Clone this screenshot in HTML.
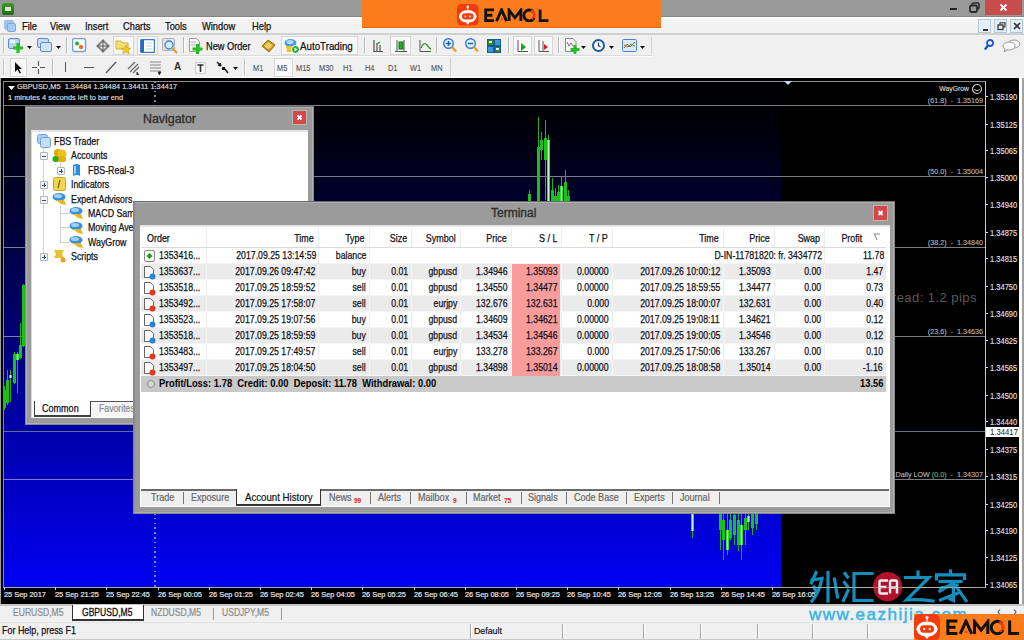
<!DOCTYPE html><html><head><meta charset="utf-8"><style>
html,body{margin:0;padding:0;}
body{width:1024px;height:640px;overflow:hidden;position:relative;background:#f0f0f0;font-family:"Liberation Sans", sans-serif;}
div{box-sizing:border-box;}
</style></head><body>
<div style="position:absolute;left:0px;top:0px;width:1024px;height:17px;background:#999999;"></div>
<div style="position:absolute;left:0px;top:16px;width:1024px;height:1px;background:#858585;"></div>
<div style="position:absolute;left:2px;top:3px;width:12px;height:12px;background:linear-gradient(#3f9a2a,#1d6a12);border-radius:2px;"><div style="position:absolute;left:3px;top:4px;width:6px;height:4px;background:#d8e8d0;"></div></div>
<div style="position:absolute;left:950px;top:8px;width:7px;height:2px;background:#222;"></div>
<svg style="position:absolute;left:969px;top:2px" width="11" height="11"><rect x="3" y="1" width="7" height="6" rx="1.5" fill="none" stroke="#2a2a2a" stroke-width="1.6"/><rect x="1" y="3.5" width="7" height="6.5" rx="1.5" fill="#999" stroke="#2a2a2a" stroke-width="1.8"/></svg>
<div style="position:absolute;left:985px;top:0px;width:37px;height:15px;background:#c94c4c;"><svg width="37" height="15" style="position:absolute;left:0;top:0"><path d="M15.5 4.5 L21.5 10.5 M21.5 4.5 L15.5 10.5" stroke="#fff" stroke-width="1.8"/></svg></div>
<div style="position:absolute;left:0px;top:17px;width:1024px;height:17px;background:#f2f2f2;border-top:2px solid #fdfdfd;"></div>
<div style="position:absolute;left:0px;top:33px;width:1024px;height:2px;background:#d0d0d0;"></div>
<div style="position:absolute;left:4px;top:20px;width:10px;height:10px;background:#9cc3ec;border-radius:2px;"></div>
<div style="position:absolute;left:7px;top:23px;width:9px;height:9px;background:#a8cdf2;border:1px solid #7aa8d8;border-radius:2px;"></div>
<div style="position:absolute;left:22px;top:21.2px;font-size:10.6px;color:#111;white-space:pre;line-height:1;transform:scaleX(0.88);transform-origin:left top;-webkit-text-stroke:0.25px #111;">File</div>
<div style="position:absolute;left:50px;top:21.2px;font-size:10.6px;color:#111;white-space:pre;line-height:1;transform:scaleX(0.88);transform-origin:left top;-webkit-text-stroke:0.25px #111;">View</div>
<div style="position:absolute;left:85px;top:21.2px;font-size:10.6px;color:#111;white-space:pre;line-height:1;transform:scaleX(0.88);transform-origin:left top;-webkit-text-stroke:0.25px #111;">Insert</div>
<div style="position:absolute;left:123px;top:21.2px;font-size:10.6px;color:#111;white-space:pre;line-height:1;transform:scaleX(0.88);transform-origin:left top;-webkit-text-stroke:0.25px #111;">Charts</div>
<div style="position:absolute;left:165px;top:21.2px;font-size:10.6px;color:#111;white-space:pre;line-height:1;transform:scaleX(0.88);transform-origin:left top;-webkit-text-stroke:0.25px #111;">Tools</div>
<div style="position:absolute;left:202px;top:21.2px;font-size:10.6px;color:#111;white-space:pre;line-height:1;transform:scaleX(0.88);transform-origin:left top;-webkit-text-stroke:0.25px #111;">Window</div>
<div style="position:absolute;left:252px;top:21.2px;font-size:10.6px;color:#111;white-space:pre;line-height:1;transform:scaleX(0.88);transform-origin:left top;-webkit-text-stroke:0.25px #111;">Help</div>
<div style="position:absolute;left:978px;top:19px;width:13px;height:14px;background:#e2eefa;border:1px solid #b9c6d3;"></div>
<div style="position:absolute;left:994px;top:19px;width:13px;height:14px;background:#e2eefa;border:1px solid #b9c6d3;"></div>
<div style="position:absolute;left:1010px;top:19px;width:13px;height:14px;background:#e2eefa;border:1px solid #b9c6d3;"></div>
<div style="position:absolute;left:983px;top:29px;width:5px;height:2px;background:#333;"></div>
<svg style="position:absolute;left:997px;top:22px" width="9" height="9"><rect x="3" y="0.8" width="5" height="4" fill="none" stroke="#444" stroke-width="1.2"/><rect x="1" y="3" width="5" height="4.5" fill="#e2eefa" stroke="#444" stroke-width="1.4"/></svg>
<svg style="position:absolute;left:1013px;top:22px" width="8" height="8"><path d="M1 1L7 7M7 1L1 7" stroke="#333" stroke-width="1.6"/></svg>
<div style="position:absolute;left:0px;top:35px;width:1024px;height:21px;background:#f0f0f0;"></div>
<div style="position:absolute;left:0px;top:55px;width:652px;height:2px;background:#dcdcdc;border-bottom:1px solid #fafafa;"></div>
<div style="position:absolute;left:0px;top:57px;width:1024px;height:21px;background:#f0f0f0;"></div>
<div style="position:absolute;left:0px;top:77px;width:1024px;height:1px;background:#ffffff;"></div>
<div style="position:absolute;left:0px;top:78px;width:1024px;height:527px;background:#a0a0a0;"></div>
<div style="position:absolute;left:1px;top:78px;width:1018px;height:526px;background:#000;"></div>
<div style="position:absolute;left:1019px;top:78px;width:3px;height:527px;background:#fdfdfd;"></div>
<div style="position:absolute;left:3px;top:81px;width:982px;height:507px;border-left:1px solid #8a8a70;border-top:1px solid #8c8c8c;"></div>
<div style="position:absolute;left:4px;top:82px;width:777px;height:505px;background:linear-gradient(180deg,#000002 0%,#00000c 10%,#00003c 30%,#0000a0 65%,#0000f2 100%);"></div>
<div style="position:absolute;left:985px;top:81px;width:1px;height:507px;background:#c8c8c8;"></div>
<div style="position:absolute;left:3px;top:587px;width:982px;height:1px;background:#a8a888;"></div>
<div style="position:absolute;left:986px;top:96px;width:2px;height:1px;background:#ddd;"></div>
<div style="position:absolute;left:990px;top:93.4px;font-size:8.4px;color:#e4e4ec;white-space:pre;line-height:1;transform:scaleX(0.9);transform-origin:left top;-webkit-text-stroke:0.1px #e4e4ec;">1.35190</div>
<div style="position:absolute;left:986px;top:124px;width:2px;height:1px;background:#ddd;"></div>
<div style="position:absolute;left:990px;top:121.4px;font-size:8.4px;color:#e4e4ec;white-space:pre;line-height:1;transform:scaleX(0.9);transform-origin:left top;-webkit-text-stroke:0.1px #e4e4ec;">1.35125</div>
<div style="position:absolute;left:986px;top:150px;width:2px;height:1px;background:#ddd;"></div>
<div style="position:absolute;left:990px;top:147.4px;font-size:8.4px;color:#e4e4ec;white-space:pre;line-height:1;transform:scaleX(0.9);transform-origin:left top;-webkit-text-stroke:0.1px #e4e4ec;">1.35065</div>
<div style="position:absolute;left:986px;top:177px;width:2px;height:1px;background:#ddd;"></div>
<div style="position:absolute;left:990px;top:174.4px;font-size:8.4px;color:#e4e4ec;white-space:pre;line-height:1;transform:scaleX(0.9);transform-origin:left top;-webkit-text-stroke:0.1px #e4e4ec;">1.35000</div>
<div style="position:absolute;left:986px;top:204px;width:2px;height:1px;background:#ddd;"></div>
<div style="position:absolute;left:990px;top:201.4px;font-size:8.4px;color:#e4e4ec;white-space:pre;line-height:1;transform:scaleX(0.9);transform-origin:left top;-webkit-text-stroke:0.1px #e4e4ec;">1.34940</div>
<div style="position:absolute;left:986px;top:232px;width:2px;height:1px;background:#ddd;"></div>
<div style="position:absolute;left:990px;top:229.4px;font-size:8.4px;color:#e4e4ec;white-space:pre;line-height:1;transform:scaleX(0.9);transform-origin:left top;-webkit-text-stroke:0.1px #e4e4ec;">1.34875</div>
<div style="position:absolute;left:986px;top:258px;width:2px;height:1px;background:#ddd;"></div>
<div style="position:absolute;left:990px;top:255.4px;font-size:8.4px;color:#e4e4ec;white-space:pre;line-height:1;transform:scaleX(0.9);transform-origin:left top;-webkit-text-stroke:0.1px #e4e4ec;">1.34815</div>
<div style="position:absolute;left:986px;top:286px;width:2px;height:1px;background:#ddd;"></div>
<div style="position:absolute;left:990px;top:283.4px;font-size:8.4px;color:#e4e4ec;white-space:pre;line-height:1;transform:scaleX(0.9);transform-origin:left top;-webkit-text-stroke:0.1px #e4e4ec;">1.34750</div>
<div style="position:absolute;left:986px;top:313px;width:2px;height:1px;background:#ddd;"></div>
<div style="position:absolute;left:990px;top:310.4px;font-size:8.4px;color:#e4e4ec;white-space:pre;line-height:1;transform:scaleX(0.9);transform-origin:left top;-webkit-text-stroke:0.1px #e4e4ec;">1.34690</div>
<div style="position:absolute;left:986px;top:340px;width:2px;height:1px;background:#ddd;"></div>
<div style="position:absolute;left:990px;top:337.4px;font-size:8.4px;color:#e4e4ec;white-space:pre;line-height:1;transform:scaleX(0.9);transform-origin:left top;-webkit-text-stroke:0.1px #e4e4ec;">1.34625</div>
<div style="position:absolute;left:986px;top:367px;width:2px;height:1px;background:#ddd;"></div>
<div style="position:absolute;left:990px;top:364.4px;font-size:8.4px;color:#e4e4ec;white-space:pre;line-height:1;transform:scaleX(0.9);transform-origin:left top;-webkit-text-stroke:0.1px #e4e4ec;">1.34565</div>
<div style="position:absolute;left:986px;top:395px;width:2px;height:1px;background:#ddd;"></div>
<div style="position:absolute;left:990px;top:392.4px;font-size:8.4px;color:#e4e4ec;white-space:pre;line-height:1;transform:scaleX(0.9);transform-origin:left top;-webkit-text-stroke:0.1px #e4e4ec;">1.34500</div>
<div style="position:absolute;left:986px;top:421px;width:2px;height:1px;background:#ddd;"></div>
<div style="position:absolute;left:990px;top:418.4px;font-size:8.4px;color:#e4e4ec;white-space:pre;line-height:1;transform:scaleX(0.9);transform-origin:left top;-webkit-text-stroke:0.1px #e4e4ec;">1.34440</div>
<div style="position:absolute;left:986px;top:449px;width:2px;height:1px;background:#ddd;"></div>
<div style="position:absolute;left:990px;top:446.4px;font-size:8.4px;color:#e4e4ec;white-space:pre;line-height:1;transform:scaleX(0.9);transform-origin:left top;-webkit-text-stroke:0.1px #e4e4ec;">1.34375</div>
<div style="position:absolute;left:986px;top:476px;width:2px;height:1px;background:#ddd;"></div>
<div style="position:absolute;left:990px;top:473.4px;font-size:8.4px;color:#e4e4ec;white-space:pre;line-height:1;transform:scaleX(0.9);transform-origin:left top;-webkit-text-stroke:0.1px #e4e4ec;">1.34315</div>
<div style="position:absolute;left:986px;top:504px;width:2px;height:1px;background:#ddd;"></div>
<div style="position:absolute;left:990px;top:501.4px;font-size:8.4px;color:#e4e4ec;white-space:pre;line-height:1;transform:scaleX(0.9);transform-origin:left top;-webkit-text-stroke:0.1px #e4e4ec;">1.34250</div>
<div style="position:absolute;left:986px;top:530px;width:2px;height:1px;background:#ddd;"></div>
<div style="position:absolute;left:990px;top:527.4px;font-size:8.4px;color:#e4e4ec;white-space:pre;line-height:1;transform:scaleX(0.9);transform-origin:left top;-webkit-text-stroke:0.1px #e4e4ec;">1.34190</div>
<div style="position:absolute;left:986px;top:557px;width:2px;height:1px;background:#ddd;"></div>
<div style="position:absolute;left:990px;top:554.4px;font-size:8.4px;color:#e4e4ec;white-space:pre;line-height:1;transform:scaleX(0.9);transform-origin:left top;-webkit-text-stroke:0.1px #e4e4ec;">1.34125</div>
<div style="position:absolute;left:986px;top:584px;width:2px;height:1px;background:#ddd;"></div>
<div style="position:absolute;left:990px;top:581.4px;font-size:8.4px;color:#e4e4ec;white-space:pre;line-height:1;transform:scaleX(0.9);transform-origin:left top;-webkit-text-stroke:0.1px #e4e4ec;">1.34065</div>
<div style="position:absolute;left:986px;top:427px;width:33px;height:10px;background:#fff;"><div style="position:absolute;left:4px;top:1px;font-size:9px;line-height:1;color:#222;transform:scaleX(0.86);transform-origin:left top;white-space:pre">1.34417</div></div>
<div style="position:absolute;left:4px;top:105px;width:981px;height:1px;background:rgba(200,200,210,0.62);"></div>
<div style="position:absolute;right:41px;top:96.8px;font-size:7.2px;color:#b0b0b0;white-space:pre;line-height:1;-webkit-text-stroke:0.15px #b0b0b0;">(61.8)  -  1.35169</div>
<div style="position:absolute;left:4px;top:176px;width:981px;height:1px;background:rgba(200,200,210,0.62);"></div>
<div style="position:absolute;right:41px;top:167.8px;font-size:7.2px;color:#b0b0b0;white-space:pre;line-height:1;-webkit-text-stroke:0.15px #b0b0b0;">(50.0)  -  1.35004</div>
<div style="position:absolute;left:4px;top:247px;width:981px;height:1px;background:rgba(200,200,210,0.62);"></div>
<div style="position:absolute;right:41px;top:238.8px;font-size:7.2px;color:#b0b0b0;white-space:pre;line-height:1;-webkit-text-stroke:0.15px #b0b0b0;">(38.2)  -  1.34840</div>
<div style="position:absolute;left:4px;top:336px;width:981px;height:1px;background:rgba(200,200,210,0.62);"></div>
<div style="position:absolute;right:41px;top:327.8px;font-size:7.2px;color:#b0b0b0;white-space:pre;line-height:1;-webkit-text-stroke:0.15px #b0b0b0;">(23.6)  -  1.34636</div>
<div style="position:absolute;left:4px;top:479px;width:981px;height:1px;background:rgba(200,200,210,0.62);"></div>
<div style="position:absolute;right:41px;top:470.8px;font-size:7.2px;color:#b0b0b0;white-space:pre;line-height:1;-webkit-text-stroke:0.15px #b0b0b0;">Daily LOW <span style="color:#40b040">(0.0)</span>  -  1.34307</div>
<div style="position:absolute;left:4px;top:431px;width:981px;height:1px;background:#607088;"></div>
<div style="position:absolute;right:55px;top:84.5px;font-size:7.6px;color:#d8d8d8;white-space:pre;line-height:1;transform:scaleX(0.9);transform-origin:right top;-webkit-text-stroke:0.15px #d8d8d8;">WayGrow</div>
<svg style="position:absolute;left:971px;top:82.5px" width="12" height="12"><circle cx="6" cy="6" r="4.5" fill="none" stroke="#ccc" stroke-width="1.2"/><path d="M3.5 6.5 Q6 9 8.5 6.5" stroke="#ccc" fill="none"/></svg>
<svg style="position:absolute;left:8px;top:86px" width="8" height="6"><path d="M0 0L7 0L3.5 4Z" fill="#fff"/></svg>
<div style="position:absolute;left:17px;top:83px;font-size:7.4px;color:#d8d8d8;white-space:pre;line-height:1;-webkit-text-stroke:0.2px #d8d8d8;">GBPUSD,M5  1.34484 1.34484 1.34411 1.34417</div>
<div style="position:absolute;left:8px;top:94px;font-size:7.4px;color:#d8d8d8;white-space:pre;line-height:1;-webkit-text-stroke:0.2px #d8d8d8;">1 minutes 4 seconds left to bar end</div>
<div style="position:absolute;left:154px;top:81px;width:2px;height:506px;background:repeating-linear-gradient(180deg,rgba(176,176,150,0.75) 0 1.6px,transparent 1.6px 4.8px);"></div>
<div style="position:absolute;left:4px;top:587px;width:1px;height:3px;background:#d8d8b0;"></div>
<div style="position:absolute;left:4px;top:591px;font-size:7.4px;color:#e8e8e8;white-space:pre;line-height:1;-webkit-text-stroke:0.2px #e8e8e8;">25 Sep 2017</div>
<div style="position:absolute;left:55px;top:587px;width:1px;height:3px;background:#d8d8b0;"></div>
<div style="position:absolute;left:55px;top:591px;font-size:7.4px;color:#e8e8e8;white-space:pre;line-height:1;-webkit-text-stroke:0.2px #e8e8e8;">25 Sep 21:25</div>
<div style="position:absolute;left:106px;top:587px;width:1px;height:3px;background:#d8d8b0;"></div>
<div style="position:absolute;left:106px;top:591px;font-size:7.4px;color:#e8e8e8;white-space:pre;line-height:1;-webkit-text-stroke:0.2px #e8e8e8;">25 Sep 22:45</div>
<div style="position:absolute;left:158px;top:587px;width:1px;height:3px;background:#d8d8b0;"></div>
<div style="position:absolute;left:158px;top:591px;font-size:7.4px;color:#e8e8e8;white-space:pre;line-height:1;-webkit-text-stroke:0.2px #e8e8e8;">26 Sep 00:05</div>
<div style="position:absolute;left:209px;top:587px;width:1px;height:3px;background:#d8d8b0;"></div>
<div style="position:absolute;left:209px;top:591px;font-size:7.4px;color:#e8e8e8;white-space:pre;line-height:1;-webkit-text-stroke:0.2px #e8e8e8;">26 Sep 01:25</div>
<div style="position:absolute;left:260px;top:587px;width:1px;height:3px;background:#d8d8b0;"></div>
<div style="position:absolute;left:260px;top:591px;font-size:7.4px;color:#e8e8e8;white-space:pre;line-height:1;-webkit-text-stroke:0.2px #e8e8e8;">26 Sep 02:45</div>
<div style="position:absolute;left:311px;top:587px;width:1px;height:3px;background:#d8d8b0;"></div>
<div style="position:absolute;left:311px;top:591px;font-size:7.4px;color:#e8e8e8;white-space:pre;line-height:1;-webkit-text-stroke:0.2px #e8e8e8;">26 Sep 04:05</div>
<div style="position:absolute;left:362px;top:587px;width:1px;height:3px;background:#d8d8b0;"></div>
<div style="position:absolute;left:362px;top:591px;font-size:7.4px;color:#e8e8e8;white-space:pre;line-height:1;-webkit-text-stroke:0.2px #e8e8e8;">26 Sep 05:25</div>
<div style="position:absolute;left:414px;top:587px;width:1px;height:3px;background:#d8d8b0;"></div>
<div style="position:absolute;left:414px;top:591px;font-size:7.4px;color:#e8e8e8;white-space:pre;line-height:1;-webkit-text-stroke:0.2px #e8e8e8;">26 Sep 06:45</div>
<div style="position:absolute;left:465px;top:587px;width:1px;height:3px;background:#d8d8b0;"></div>
<div style="position:absolute;left:465px;top:591px;font-size:7.4px;color:#e8e8e8;white-space:pre;line-height:1;-webkit-text-stroke:0.2px #e8e8e8;">26 Sep 08:05</div>
<div style="position:absolute;left:516px;top:587px;width:1px;height:3px;background:#d8d8b0;"></div>
<div style="position:absolute;left:516px;top:591px;font-size:7.4px;color:#e8e8e8;white-space:pre;line-height:1;-webkit-text-stroke:0.2px #e8e8e8;">26 Sep 09:25</div>
<div style="position:absolute;left:567px;top:587px;width:1px;height:3px;background:#d8d8b0;"></div>
<div style="position:absolute;left:567px;top:591px;font-size:7.4px;color:#e8e8e8;white-space:pre;line-height:1;-webkit-text-stroke:0.2px #e8e8e8;">26 Sep 10:45</div>
<div style="position:absolute;left:618px;top:587px;width:1px;height:3px;background:#d8d8b0;"></div>
<div style="position:absolute;left:618px;top:591px;font-size:7.4px;color:#e8e8e8;white-space:pre;line-height:1;-webkit-text-stroke:0.2px #e8e8e8;">26 Sep 12:05</div>
<div style="position:absolute;left:670px;top:587px;width:1px;height:3px;background:#d8d8b0;"></div>
<div style="position:absolute;left:670px;top:591px;font-size:7.4px;color:#e8e8e8;white-space:pre;line-height:1;-webkit-text-stroke:0.2px #e8e8e8;">26 Sep 13:25</div>
<div style="position:absolute;left:721px;top:587px;width:1px;height:3px;background:#d8d8b0;"></div>
<div style="position:absolute;left:721px;top:591px;font-size:7.4px;color:#e8e8e8;white-space:pre;line-height:1;-webkit-text-stroke:0.2px #e8e8e8;">26 Sep 14:45</div>
<div style="position:absolute;left:772px;top:587px;width:1px;height:3px;background:#d8d8b0;"></div>
<div style="position:absolute;left:772px;top:591px;font-size:7.4px;color:#e8e8e8;white-space:pre;line-height:1;-webkit-text-stroke:0.2px #e8e8e8;">26 Sep 16:05</div>
<svg style="position:absolute;left:784px;top:81px" width="9" height="6"><path d="M0 0L8 0L4 4Z" fill="#c8d8f0"/></svg>
<div style="position:absolute;right:47px;top:291px;font-size:13px;color:#5a5a5a;white-space:pre;line-height:1;letter-spacing:0.45px;">Spread: 1.2 pips</div>
<div style="position:absolute;left:4px;top:386px;width:1px;height:24px;background:#18b418;"></div><div style="position:absolute;left:3px;top:390px;width:3px;height:18px;background:#1cc01c;"></div>
<div style="position:absolute;left:7px;top:370px;width:1px;height:35px;background:#18b418;"></div><div style="position:absolute;left:6px;top:380px;width:3px;height:23px;background:#1cc01c;"></div>
<div style="position:absolute;left:10px;top:370px;width:1px;height:32px;background:#18b418;"></div><div style="position:absolute;left:9px;top:375px;width:3px;height:3px;background:#b8ffb0;border-left:1px solid #30e030;border-right:1px solid #30e030;"></div>
<div style="position:absolute;left:14px;top:352px;width:1px;height:32px;background:#18b418;"></div><div style="position:absolute;left:13px;top:354px;width:3px;height:29px;background:#1cc01c;"></div>
<div style="position:absolute;left:17px;top:352px;width:1px;height:41px;background:#18b418;"></div><div style="position:absolute;left:16px;top:354px;width:3px;height:6px;background:#b8ffb0;border-left:1px solid #30e030;border-right:1px solid #30e030;"></div>
<div style="position:absolute;left:20px;top:323px;width:1px;height:36px;background:#18b418;"></div><div style="position:absolute;left:19px;top:345px;width:3px;height:13px;background:#1cc01c;"></div>
<div style="position:absolute;left:23px;top:284px;width:1px;height:63px;background:#18b418;"></div><div style="position:absolute;left:22px;top:285px;width:3px;height:61px;background:#1cc01c;"></div>
<div style="position:absolute;left:529px;top:190px;width:1px;height:11px;background:#18b418;"></div><div style="position:absolute;left:528px;top:194px;width:3px;height:7px;background:#1cc01c;"></div>
<div style="position:absolute;left:538px;top:117px;width:1px;height:84px;background:#18b418;"></div><div style="position:absolute;left:537px;top:147px;width:3px;height:54px;background:#1cc01c;"></div>
<div style="position:absolute;left:541px;top:132px;width:1px;height:28px;background:#18b418;"></div><div style="position:absolute;left:540px;top:140px;width:3px;height:10px;background:#1cc01c;"></div>
<div style="position:absolute;left:545px;top:120px;width:1px;height:80px;background:#18b418;"></div><div style="position:absolute;left:544px;top:138px;width:3px;height:22px;background:#1cc01c;"></div>
<div style="position:absolute;left:548px;top:135px;width:1px;height:66px;background:#18b418;"></div><div style="position:absolute;left:547px;top:140px;width:3px;height:61px;background:#b8ffb0;border-left:1px solid #30e030;border-right:1px solid #30e030;"></div>
<div style="position:absolute;left:552px;top:178px;width:1px;height:23px;background:#18b418;"></div><div style="position:absolute;left:551px;top:190px;width:3px;height:11px;background:#1cc01c;"></div>
<div style="position:absolute;left:555px;top:188px;width:1px;height:13px;background:#18b418;"></div><div style="position:absolute;left:554px;top:196px;width:3px;height:5px;background:#1cc01c;"></div>
<div style="position:absolute;left:558px;top:185px;width:1px;height:16px;background:#18b418;"></div><div style="position:absolute;left:557px;top:192px;width:3px;height:9px;background:#1cc01c;"></div>
<div style="position:absolute;left:561px;top:176px;width:1px;height:25px;background:#18b418;"></div><div style="position:absolute;left:560px;top:186px;width:3px;height:15px;background:#b8ffb0;border-left:1px solid #30e030;border-right:1px solid #30e030;"></div>
<div style="position:absolute;left:565px;top:170px;width:1px;height:31px;background:#18b418;"></div><div style="position:absolute;left:564px;top:182px;width:3px;height:19px;background:#1cc01c;"></div>
<div style="position:absolute;left:568px;top:190px;width:1px;height:11px;background:#18b418;"></div><div style="position:absolute;left:567px;top:196px;width:3px;height:5px;background:#1cc01c;"></div>
<div style="position:absolute;left:692px;top:513px;width:1px;height:25px;background:#18b418;"></div><div style="position:absolute;left:691px;top:513px;width:3px;height:18px;background:#b8ffb0;border-left:1px solid #30e030;border-right:1px solid #30e030;"></div>
<div style="position:absolute;left:720px;top:513px;width:1px;height:37px;background:#18b418;"></div><div style="position:absolute;left:719px;top:513px;width:3px;height:17px;background:#1cc01c;"></div>
<div style="position:absolute;left:723px;top:513px;width:1px;height:47px;background:#18b418;"></div><div style="position:absolute;left:722px;top:520px;width:3px;height:20px;background:#1cc01c;"></div>
<div style="position:absolute;left:727px;top:513px;width:1px;height:42px;background:#18b418;"></div><div style="position:absolute;left:726px;top:530px;width:3px;height:20px;background:#b8ffb0;border-left:1px solid #30e030;border-right:1px solid #30e030;"></div>
<div style="position:absolute;left:730px;top:513px;width:1px;height:27px;background:#18b418;"></div><div style="position:absolute;left:729px;top:520px;width:3px;height:18px;background:#1cc01c;"></div>
<div style="position:absolute;left:734px;top:513px;width:1px;height:32px;background:#18b418;"></div><div style="position:absolute;left:733px;top:515px;width:3px;height:20px;background:#1cc01c;"></div>
<div style="position:absolute;left:738px;top:513px;width:1px;height:38px;background:#18b418;"></div><div style="position:absolute;left:737px;top:520px;width:3px;height:25px;background:#1cc01c;"></div>
<div style="position:absolute;left:741px;top:513px;width:1px;height:47px;background:#18b418;"></div><div style="position:absolute;left:740px;top:525px;width:3px;height:20px;background:#b8ffb0;border-left:1px solid #30e030;border-right:1px solid #30e030;"></div>
<div style="position:absolute;left:745px;top:513px;width:1px;height:32px;background:#18b418;"></div><div style="position:absolute;left:744px;top:518px;width:3px;height:12px;background:#1cc01c;"></div>
<div style="position:absolute;left:748px;top:513px;width:1px;height:17px;background:#18b418;"></div><div style="position:absolute;left:747px;top:516px;width:3px;height:6px;background:#b8ffb0;border-left:1px solid #30e030;border-right:1px solid #30e030;"></div>
<div style="position:absolute;left:752px;top:513px;width:1px;height:22px;background:#18b418;"></div><div style="position:absolute;left:751px;top:513px;width:3px;height:15px;background:#1cc01c;"></div>
<div style="position:absolute;left:756px;top:513px;width:1px;height:17px;background:#18b418;"></div><div style="position:absolute;left:755px;top:513px;width:3px;height:11px;background:#1cc01c;"></div>
<div style="position:absolute;left:25px;top:106px;width:289px;height:319px;background:#9b9b9b;border:1px solid #888;border-top-color:#6a6a6a;"></div>
<div style="position:absolute;left:26px;top:107px;width:287px;height:317px;border:1px solid #b0b0b0;"></div>
<div style="position:absolute;left:143px;top:113px;font-size:12.5px;color:#2e2e2e;white-space:pre;line-height:1;transform:scaleX(0.99);transform-origin:left top;-webkit-text-stroke:0.35px #2e2e2e;">Navigator</div>
<div style="position:absolute;left:292px;top:110px;width:15px;height:15px;background:#d64848;border:1px solid #b8b8b8;"><svg width="13" height="13" style="position:absolute;left:0;top:0"><path d="M4.5 4.5L8.5 8.5M8.5 4.5L4.5 8.5" stroke="#fff" stroke-width="1.8"/></svg></div>
<div style="position:absolute;left:31px;top:130px;width:277px;height:288px;background:#fff;border-top:2px solid #e4e4e4;border-left:1px solid #d8d8d8;"></div>
<div style="position:absolute;left:43px;top:148px;width:1px;height:109px;border-left:1px solid #cfcfcf;"></div>
<div style="position:absolute;left:60px;top:163px;width:1px;height:8px;border-left:1px solid #cfcfcf;"></div>
<div style="position:absolute;left:60px;top:206px;width:1px;height:37px;border-left:1px solid #cfcfcf;"></div>
<div style="position:absolute;left:54px;top:136.7px;font-size:10.4px;color:#101018;white-space:pre;line-height:1;transform:scaleX(0.85);transform-origin:left top;-webkit-text-stroke:0.25px #101018;">FBS Trader</div>
<div style="position:absolute;left:71px;top:151.2px;font-size:10.4px;color:#101018;white-space:pre;line-height:1;transform:scaleX(0.85);transform-origin:left top;-webkit-text-stroke:0.25px #101018;">Accounts</div>
<div style="position:absolute;left:40px;top:152px;width:8px;height:8px;background:#f6f6f6;border:1px solid #b4b4b4;border-radius:1px;"><div style="position:absolute;left:1px;top:2.5px;width:4px;height:1px;background:#2a4a9a;"></div></div>
<div style="position:absolute;left:88px;top:165.7px;font-size:10.4px;color:#101018;white-space:pre;line-height:1;transform:scaleX(0.85);transform-origin:left top;-webkit-text-stroke:0.25px #101018;">FBS-Real-3</div>
<div style="position:absolute;left:57px;top:167px;width:8px;height:8px;background:#f6f6f6;border:1px solid #b4b4b4;border-radius:1px;"><div style="position:absolute;left:1px;top:2.5px;width:4px;height:1px;background:#2a4a9a;"></div><div style="position:absolute;left:2.5px;top:1px;width:1px;height:4px;background:#2a4a9a;"></div></div>
<div style="position:absolute;left:71px;top:180.2px;font-size:10.4px;color:#101018;white-space:pre;line-height:1;transform:scaleX(0.85);transform-origin:left top;-webkit-text-stroke:0.25px #101018;">Indicators</div>
<div style="position:absolute;left:40px;top:181px;width:8px;height:8px;background:#f6f6f6;border:1px solid #b4b4b4;border-radius:1px;"><div style="position:absolute;left:1px;top:2.5px;width:4px;height:1px;background:#2a4a9a;"></div><div style="position:absolute;left:2.5px;top:1px;width:1px;height:4px;background:#2a4a9a;"></div></div>
<div style="position:absolute;left:71px;top:194.7px;font-size:10.4px;color:#101018;white-space:pre;line-height:1;transform:scaleX(0.85);transform-origin:left top;-webkit-text-stroke:0.25px #101018;">Expert Advisors</div>
<div style="position:absolute;left:40px;top:196px;width:8px;height:8px;background:#f6f6f6;border:1px solid #b4b4b4;border-radius:1px;"><div style="position:absolute;left:1px;top:2.5px;width:4px;height:1px;background:#2a4a9a;"></div></div>
<div style="position:absolute;left:88px;top:208.7px;font-size:10.4px;color:#101018;white-space:pre;line-height:1;transform:scaleX(0.85);transform-origin:left top;-webkit-text-stroke:0.25px #101018;">MACD Sample</div>
<div style="position:absolute;left:61px;top:213px;width:9px;height:1px;border-top:1px solid #cfcfcf;"></div>
<div style="position:absolute;left:88px;top:223.2px;font-size:10.4px;color:#101018;white-space:pre;line-height:1;transform:scaleX(0.85);transform-origin:left top;-webkit-text-stroke:0.25px #101018;">Moving Average</div>
<div style="position:absolute;left:61px;top:227px;width:9px;height:1px;border-top:1px solid #cfcfcf;"></div>
<div style="position:absolute;left:88px;top:237.7px;font-size:10.4px;color:#101018;white-space:pre;line-height:1;transform:scaleX(0.85);transform-origin:left top;-webkit-text-stroke:0.25px #101018;">WayGrow</div>
<div style="position:absolute;left:61px;top:242px;width:9px;height:1px;border-top:1px solid #cfcfcf;"></div>
<div style="position:absolute;left:71px;top:252.2px;font-size:10.4px;color:#101018;white-space:pre;line-height:1;transform:scaleX(0.85);transform-origin:left top;-webkit-text-stroke:0.25px #101018;">Scripts</div>
<div style="position:absolute;left:40px;top:253px;width:8px;height:8px;background:#f6f6f6;border:1px solid #b4b4b4;border-radius:1px;"><div style="position:absolute;left:1px;top:2.5px;width:4px;height:1px;background:#2a4a9a;"></div><div style="position:absolute;left:2.5px;top:1px;width:1px;height:4px;background:#2a4a9a;"></div></div>
<svg style="position:absolute;left:37px;top:134px" width="14" height="14"><rect x="0.5" y="0.5" width="10" height="9" rx="2" fill="#a9cdf3" stroke="#6fa2dc"/><rect x="3.5" y="3.5" width="10" height="10" rx="2" fill="#c5def8" stroke="#6fa2dc"/></svg>
<svg style="position:absolute;left:52px;top:148px" width="16" height="15"><circle cx="6" cy="5" r="4" fill="#e0a800"/><circle cx="10" cy="6" r="4.5" fill="#f0c020"/><rect x="3" y="8" width="11" height="6" rx="2" fill="#e3b010"/><circle cx="3.5" cy="11" r="3" fill="#20b020"/></svg>
<svg style="position:absolute;left:72px;top:163px" width="10" height="15"><path d="M1 2 Q5 0 8 2 L8 13 Q5 11 1 13Z" fill="#2a8de0"/><path d="M2 3 L4 3 L4 10 L2 11Z" fill="#9fd0ff"/></svg>
<svg style="position:absolute;left:53px;top:177px" width="13" height="14"><rect x="0.5" y="0.5" width="12" height="13" rx="2" fill="#f2d650" stroke="#c9a020"/><path d="M7 3 L5 11" stroke="#7a5a00" stroke-width="1.2"/></svg>
<svg style="position:absolute;left:52px;top:191px" width="16" height="15"><ellipse cx="7" cy="6" rx="6.5" ry="4" fill="#3b8fd8"/><ellipse cx="6" cy="5" rx="4" ry="2" fill="#9fd0f5"/><path d="M4 9 L12 9 L14 14 L9 13 Z" fill="#e5b820"/></svg>
<svg style="position:absolute;left:69px;top:205px" width="16" height="15"><ellipse cx="7" cy="6" rx="6.5" ry="4" fill="#3b8fd8"/><ellipse cx="6" cy="5" rx="4" ry="2" fill="#9fd0f5"/><path d="M4 9 L12 9 L14 14 L9 13 Z" fill="#e5b820"/></svg>
<svg style="position:absolute;left:69px;top:220px" width="16" height="15"><ellipse cx="7" cy="6" rx="6.5" ry="4" fill="#3b8fd8"/><ellipse cx="6" cy="5" rx="4" ry="2" fill="#9fd0f5"/><path d="M4 9 L12 9 L14 14 L9 13 Z" fill="#e5b820"/></svg>
<svg style="position:absolute;left:69px;top:234px" width="16" height="15"><ellipse cx="7" cy="6" rx="6.5" ry="4" fill="#3b8fd8"/><ellipse cx="6" cy="5" rx="4" ry="2" fill="#9fd0f5"/><path d="M4 9 L12 9 L14 14 L9 13 Z" fill="#e5b820"/></svg>
<svg style="position:absolute;left:53px;top:249px" width="14" height="14"><path d="M1 1 L11 1 L9 5 L11 9 L1 9 L3 5Z" fill="#e8c030"/><circle cx="10" cy="11" r="2.5" fill="#e8a020"/></svg>
<div style="position:absolute;left:34px;top:401px;width:57px;height:16px;background:#fff;border-left:1px solid #404040;border-bottom:2px solid #404040;border-right:1px solid #404040;"></div>
<div style="position:absolute;left:42px;top:403.5px;font-size:10.4px;color:#101018;white-space:pre;line-height:1;transform:scaleX(0.87);transform-origin:left top;-webkit-text-stroke:0.25px #101018;">Common</div>
<div style="position:absolute;left:91px;top:401px;width:217px;height:1px;background:#555;"></div>
<div style="position:absolute;left:91px;top:402px;width:217px;height:15px;background:#f6f6f6;"></div>
<div style="position:absolute;left:99px;top:404px;font-size:10px;color:#8a8a8a;white-space:pre;line-height:1;transform:scaleX(0.87);transform-origin:left top;-webkit-text-stroke:0.2px #8a8a8a;">Favorites</div>
<div style="position:absolute;left:133px;top:201px;width:762px;height:313px;background:#9b9b9b;border:1px solid #888;border-top-color:#6a6a6a;"></div>
<div style="position:absolute;left:134px;top:202px;width:760px;height:311px;border:1px solid #b0b0b0;border-left-color:#8a8a8a;"></div>
<div style="position:absolute;left:491px;top:207px;font-size:12.5px;color:#2e2e2e;white-space:pre;line-height:1;transform:scaleX(0.96);transform-origin:left top;-webkit-text-stroke:0.35px #2e2e2e;">Terminal</div>
<div style="position:absolute;left:873px;top:205px;width:15px;height:16px;background:#d64848;border:1px solid #b8b8b8;"><svg width="13" height="14" style="position:absolute;left:0;top:0"><path d="M4.5 5L8.5 9M8.5 5L4.5 9" stroke="#fff" stroke-width="1.8"/></svg></div>
<div style="position:absolute;left:140px;top:225px;width:750px;height:282px;background:#fff;border-top:2px solid #e4e4e4;"></div>
<div style="position:absolute;left:141px;top:227px;width:745px;height:21px;background:#fff;border-bottom:1px solid #dadada;"></div>
<div style="position:absolute;left:147px;top:233.5px;font-size:10.4px;color:#101018;white-space:pre;line-height:1;transform:scaleX(0.86);transform-origin:left top;-webkit-text-stroke:0.25px #101018;">Order</div>
<div style="position:absolute;left:206px;top:228px;width:1px;height:19px;background:#e6edf5;"></div>
<div style="position:absolute;right:710px;top:233.5px;font-size:10.4px;color:#101018;white-space:pre;line-height:1;transform:scaleX(0.86);transform-origin:right top;-webkit-text-stroke:0.25px #101018;">Time</div>
<div style="position:absolute;left:318px;top:228px;width:1px;height:19px;background:#e6edf5;"></div>
<div style="position:absolute;right:659px;top:233.5px;font-size:10.4px;color:#101018;white-space:pre;line-height:1;transform:scaleX(0.86);transform-origin:right top;-webkit-text-stroke:0.25px #101018;">Type</div>
<div style="position:absolute;left:369px;top:228px;width:1px;height:19px;background:#e6edf5;"></div>
<div style="position:absolute;right:617px;top:233.5px;font-size:10.4px;color:#101018;white-space:pre;line-height:1;transform:scaleX(0.86);transform-origin:right top;-webkit-text-stroke:0.25px #101018;">Size</div>
<div style="position:absolute;left:411px;top:228px;width:1px;height:19px;background:#e6edf5;"></div>
<div style="position:absolute;right:568px;top:233.5px;font-size:10.4px;color:#101018;white-space:pre;line-height:1;transform:scaleX(0.86);transform-origin:right top;-webkit-text-stroke:0.25px #101018;">Symbol</div>
<div style="position:absolute;left:460px;top:228px;width:1px;height:19px;background:#e6edf5;"></div>
<div style="position:absolute;right:517px;top:233.5px;font-size:10.4px;color:#101018;white-space:pre;line-height:1;transform:scaleX(0.86);transform-origin:right top;-webkit-text-stroke:0.25px #101018;">Price</div>
<div style="position:absolute;left:511px;top:228px;width:1px;height:19px;background:#e6edf5;"></div>
<div style="position:absolute;right:467px;top:233.5px;font-size:10.4px;color:#101018;white-space:pre;line-height:1;transform:scaleX(0.86);transform-origin:right top;-webkit-text-stroke:0.25px #101018;">S / L</div>
<div style="position:absolute;left:561px;top:228px;width:1px;height:19px;background:#e6edf5;"></div>
<div style="position:absolute;right:416px;top:233.5px;font-size:10.4px;color:#101018;white-space:pre;line-height:1;transform:scaleX(0.86);transform-origin:right top;-webkit-text-stroke:0.25px #101018;">T / P</div>
<div style="position:absolute;left:612px;top:228px;width:1px;height:19px;background:#e6edf5;"></div>
<div style="position:absolute;right:305px;top:233.5px;font-size:10.4px;color:#101018;white-space:pre;line-height:1;transform:scaleX(0.86);transform-origin:right top;-webkit-text-stroke:0.25px #101018;">Time</div>
<div style="position:absolute;left:723px;top:228px;width:1px;height:19px;background:#e6edf5;"></div>
<div style="position:absolute;right:254px;top:233.5px;font-size:10.4px;color:#101018;white-space:pre;line-height:1;transform:scaleX(0.86);transform-origin:right top;-webkit-text-stroke:0.25px #101018;">Price</div>
<div style="position:absolute;left:774px;top:228px;width:1px;height:19px;background:#e6edf5;"></div>
<div style="position:absolute;right:204px;top:233.5px;font-size:10.4px;color:#101018;white-space:pre;line-height:1;transform:scaleX(0.86);transform-origin:right top;-webkit-text-stroke:0.25px #101018;">Swap</div>
<div style="position:absolute;left:824px;top:228px;width:1px;height:19px;background:#e6edf5;"></div>
<div style="position:absolute;right:162px;top:233.5px;font-size:10.4px;color:#101018;white-space:pre;line-height:1;transform:scaleX(0.86);transform-origin:right top;-webkit-text-stroke:0.25px #101018;">Profit</div>
<svg style="position:absolute;left:873px;top:233px" width="8" height="8"><path d="M0.5 1 L7 1 M1.5 1 L4 7" stroke="#888" stroke-width="1" fill="none"/></svg>
<div style="position:absolute;left:141px;top:248px;width:745px;height:16px;background:#ffffff;border-bottom:1px solid #f4f4f4;"></div>
<div style="position:absolute;left:206px;top:248px;width:1px;height:16px;background:#ececec;"></div>
<div style="position:absolute;left:318px;top:248px;width:1px;height:16px;background:#ececec;"></div>
<div style="position:absolute;left:369px;top:248px;width:1px;height:16px;background:#ececec;"></div>
<div style="position:absolute;left:824px;top:248px;width:1px;height:16px;background:#ececec;"></div>
<div style="position:absolute;left:824px;top:248px;width:1px;height:16px;background:#ececec;"></div>
<div style="position:absolute;left:144px;top:250px;width:11px;height:12px;background:#fbfbfb;border:1px solid #888;border-radius:2px;"><svg width="9" height="10" style="position:absolute;left:0;top:0"><path d="M4.5 2L7.5 5L4.5 8L1.5 5Z" fill="#1aa01a"/></svg></div>
<div style="position:absolute;left:159px;top:251.3px;font-size:10.4px;color:#101018;white-space:pre;line-height:1;transform:scaleX(0.84);transform-origin:left top;-webkit-text-stroke:0.25px #101018;">1353416...</div>
<div style="position:absolute;right:708px;top:251.3px;font-size:10.4px;color:#101018;white-space:pre;line-height:1;transform:scaleX(0.84);transform-origin:right top;-webkit-text-stroke:0.25px #101018;">2017.09.25 13:14:59</div>
<div style="position:absolute;right:658px;top:251.3px;font-size:10.4px;color:#101018;white-space:pre;line-height:1;transform:scaleX(0.84);transform-origin:right top;-webkit-text-stroke:0.25px #101018;">balance</div>
<div style="position:absolute;right:202px;top:251.3px;font-size:10.4px;color:#101018;white-space:pre;line-height:1;transform:scaleX(0.84);transform-origin:right top;-webkit-text-stroke:0.25px #101018;">D-IN-11781820: fr. 3434772</div>
<div style="position:absolute;right:140px;top:251.3px;font-size:10.4px;color:#101018;white-space:pre;line-height:1;transform:scaleX(0.84);transform-origin:right top;-webkit-text-stroke:0.25px #101018;">11.78</div>
<div style="position:absolute;left:141px;top:264px;width:745px;height:16px;background:#ebebeb;border-bottom:1px solid #f4f4f4;"></div>
<div style="position:absolute;left:511px;top:264px;width:49px;height:16px;background:#f99c9c;"></div>
<div style="position:absolute;left:206px;top:264px;width:1px;height:16px;background:#f6f6f6;"></div>
<div style="position:absolute;left:318px;top:264px;width:1px;height:16px;background:#f6f6f6;"></div>
<div style="position:absolute;left:369px;top:264px;width:1px;height:16px;background:#f6f6f6;"></div>
<div style="position:absolute;left:411px;top:264px;width:1px;height:16px;background:#f6f6f6;"></div>
<div style="position:absolute;left:460px;top:264px;width:1px;height:16px;background:#f6f6f6;"></div>
<div style="position:absolute;left:511px;top:264px;width:1px;height:16px;background:#f6f6f6;"></div>
<div style="position:absolute;left:561px;top:264px;width:1px;height:16px;background:#f6f6f6;"></div>
<div style="position:absolute;left:612px;top:264px;width:1px;height:16px;background:#f6f6f6;"></div>
<div style="position:absolute;left:723px;top:264px;width:1px;height:16px;background:#f6f6f6;"></div>
<div style="position:absolute;left:774px;top:264px;width:1px;height:16px;background:#f6f6f6;"></div>
<div style="position:absolute;left:824px;top:264px;width:1px;height:16px;background:#f6f6f6;"></div>
<svg style="position:absolute;left:143px;top:265px" width="14" height="15"><path d="M1.5 1.5 L7.5 1.5 L10.5 4.5 L10.5 12.5 L1.5 12.5 Z" fill="#fff" stroke="#666"/><circle cx="9.5" cy="11.5" r="3" fill="#2a7fd8"/></svg>
<div style="position:absolute;left:159px;top:267.3px;font-size:10.4px;color:#101018;white-space:pre;line-height:1;transform:scaleX(0.84);transform-origin:left top;-webkit-text-stroke:0.25px #101018;">1353637...</div>
<div style="position:absolute;right:709px;top:267.3px;font-size:10.4px;color:#101018;white-space:pre;line-height:1;transform:scaleX(0.84);transform-origin:right top;-webkit-text-stroke:0.25px #101018;">2017.09.26 09:47:42</div>
<div style="position:absolute;right:658px;top:267.3px;font-size:10.4px;color:#101018;white-space:pre;line-height:1;transform:scaleX(0.84);transform-origin:right top;-webkit-text-stroke:0.25px #101018;">buy</div>
<div style="position:absolute;right:616px;top:267.3px;font-size:10.4px;color:#101018;white-space:pre;line-height:1;transform:scaleX(0.84);transform-origin:right top;-webkit-text-stroke:0.25px #101018;">0.01</div>
<div style="position:absolute;right:567px;top:267.3px;font-size:10.4px;color:#101018;white-space:pre;line-height:1;transform:scaleX(0.84);transform-origin:right top;-webkit-text-stroke:0.25px #101018;">gbpusd</div>
<div style="position:absolute;right:516px;top:267.3px;font-size:10.4px;color:#101018;white-space:pre;line-height:1;transform:scaleX(0.84);transform-origin:right top;-webkit-text-stroke:0.25px #101018;">1.34946</div>
<div style="position:absolute;right:466px;top:267.3px;font-size:10.4px;color:#101018;white-space:pre;line-height:1;transform:scaleX(0.84);transform-origin:right top;-webkit-text-stroke:0.25px #101018;">1.35093</div>
<div style="position:absolute;right:415px;top:267.3px;font-size:10.4px;color:#101018;white-space:pre;line-height:1;transform:scaleX(0.84);transform-origin:right top;-webkit-text-stroke:0.25px #101018;">0.00000</div>
<div style="position:absolute;right:304px;top:267.3px;font-size:10.4px;color:#101018;white-space:pre;line-height:1;transform:scaleX(0.84);transform-origin:right top;-webkit-text-stroke:0.25px #101018;">2017.09.26 10:00:12</div>
<div style="position:absolute;right:253px;top:267.3px;font-size:10.4px;color:#101018;white-space:pre;line-height:1;transform:scaleX(0.84);transform-origin:right top;-webkit-text-stroke:0.25px #101018;">1.35093</div>
<div style="position:absolute;right:203px;top:267.3px;font-size:10.4px;color:#101018;white-space:pre;line-height:1;transform:scaleX(0.84);transform-origin:right top;-webkit-text-stroke:0.25px #101018;">0.00</div>
<div style="position:absolute;right:141px;top:267.3px;font-size:10.4px;color:#101018;white-space:pre;line-height:1;transform:scaleX(0.84);transform-origin:right top;-webkit-text-stroke:0.25px #101018;">1.47</div>
<div style="position:absolute;left:141px;top:280px;width:745px;height:16px;background:#ffffff;border-bottom:1px solid #f4f4f4;"></div>
<div style="position:absolute;left:511px;top:280px;width:49px;height:16px;background:#f99c9c;"></div>
<div style="position:absolute;left:206px;top:280px;width:1px;height:16px;background:#ececec;"></div>
<div style="position:absolute;left:318px;top:280px;width:1px;height:16px;background:#ececec;"></div>
<div style="position:absolute;left:369px;top:280px;width:1px;height:16px;background:#ececec;"></div>
<div style="position:absolute;left:411px;top:280px;width:1px;height:16px;background:#ececec;"></div>
<div style="position:absolute;left:460px;top:280px;width:1px;height:16px;background:#ececec;"></div>
<div style="position:absolute;left:511px;top:280px;width:1px;height:16px;background:#ececec;"></div>
<div style="position:absolute;left:561px;top:280px;width:1px;height:16px;background:#ececec;"></div>
<div style="position:absolute;left:612px;top:280px;width:1px;height:16px;background:#ececec;"></div>
<div style="position:absolute;left:723px;top:280px;width:1px;height:16px;background:#ececec;"></div>
<div style="position:absolute;left:774px;top:280px;width:1px;height:16px;background:#ececec;"></div>
<div style="position:absolute;left:824px;top:280px;width:1px;height:16px;background:#ececec;"></div>
<svg style="position:absolute;left:143px;top:281px" width="14" height="15"><path d="M1.5 1.5 L7.5 1.5 L10.5 4.5 L10.5 12.5 L1.5 12.5 Z" fill="#fff" stroke="#666"/><circle cx="9.5" cy="11.5" r="3" fill="#e03a1a"/></svg>
<div style="position:absolute;left:159px;top:283.3px;font-size:10.4px;color:#101018;white-space:pre;line-height:1;transform:scaleX(0.84);transform-origin:left top;-webkit-text-stroke:0.25px #101018;">1353518...</div>
<div style="position:absolute;right:709px;top:283.3px;font-size:10.4px;color:#101018;white-space:pre;line-height:1;transform:scaleX(0.84);transform-origin:right top;-webkit-text-stroke:0.25px #101018;">2017.09.25 18:59:52</div>
<div style="position:absolute;right:658px;top:283.3px;font-size:10.4px;color:#101018;white-space:pre;line-height:1;transform:scaleX(0.84);transform-origin:right top;-webkit-text-stroke:0.25px #101018;">sell</div>
<div style="position:absolute;right:616px;top:283.3px;font-size:10.4px;color:#101018;white-space:pre;line-height:1;transform:scaleX(0.84);transform-origin:right top;-webkit-text-stroke:0.25px #101018;">0.01</div>
<div style="position:absolute;right:567px;top:283.3px;font-size:10.4px;color:#101018;white-space:pre;line-height:1;transform:scaleX(0.84);transform-origin:right top;-webkit-text-stroke:0.25px #101018;">gbpusd</div>
<div style="position:absolute;right:516px;top:283.3px;font-size:10.4px;color:#101018;white-space:pre;line-height:1;transform:scaleX(0.84);transform-origin:right top;-webkit-text-stroke:0.25px #101018;">1.34550</div>
<div style="position:absolute;right:466px;top:283.3px;font-size:10.4px;color:#101018;white-space:pre;line-height:1;transform:scaleX(0.84);transform-origin:right top;-webkit-text-stroke:0.25px #101018;">1.34477</div>
<div style="position:absolute;right:415px;top:283.3px;font-size:10.4px;color:#101018;white-space:pre;line-height:1;transform:scaleX(0.84);transform-origin:right top;-webkit-text-stroke:0.25px #101018;">0.00000</div>
<div style="position:absolute;right:304px;top:283.3px;font-size:10.4px;color:#101018;white-space:pre;line-height:1;transform:scaleX(0.84);transform-origin:right top;-webkit-text-stroke:0.25px #101018;">2017.09.25 18:59:55</div>
<div style="position:absolute;right:253px;top:283.3px;font-size:10.4px;color:#101018;white-space:pre;line-height:1;transform:scaleX(0.84);transform-origin:right top;-webkit-text-stroke:0.25px #101018;">1.34477</div>
<div style="position:absolute;right:203px;top:283.3px;font-size:10.4px;color:#101018;white-space:pre;line-height:1;transform:scaleX(0.84);transform-origin:right top;-webkit-text-stroke:0.25px #101018;">0.00</div>
<div style="position:absolute;right:141px;top:283.3px;font-size:10.4px;color:#101018;white-space:pre;line-height:1;transform:scaleX(0.84);transform-origin:right top;-webkit-text-stroke:0.25px #101018;">0.73</div>
<div style="position:absolute;left:141px;top:296px;width:745px;height:16px;background:#ebebeb;border-bottom:1px solid #f4f4f4;"></div>
<div style="position:absolute;left:511px;top:296px;width:49px;height:16px;background:#f99c9c;"></div>
<div style="position:absolute;left:206px;top:296px;width:1px;height:16px;background:#f6f6f6;"></div>
<div style="position:absolute;left:318px;top:296px;width:1px;height:16px;background:#f6f6f6;"></div>
<div style="position:absolute;left:369px;top:296px;width:1px;height:16px;background:#f6f6f6;"></div>
<div style="position:absolute;left:411px;top:296px;width:1px;height:16px;background:#f6f6f6;"></div>
<div style="position:absolute;left:460px;top:296px;width:1px;height:16px;background:#f6f6f6;"></div>
<div style="position:absolute;left:511px;top:296px;width:1px;height:16px;background:#f6f6f6;"></div>
<div style="position:absolute;left:561px;top:296px;width:1px;height:16px;background:#f6f6f6;"></div>
<div style="position:absolute;left:612px;top:296px;width:1px;height:16px;background:#f6f6f6;"></div>
<div style="position:absolute;left:723px;top:296px;width:1px;height:16px;background:#f6f6f6;"></div>
<div style="position:absolute;left:774px;top:296px;width:1px;height:16px;background:#f6f6f6;"></div>
<div style="position:absolute;left:824px;top:296px;width:1px;height:16px;background:#f6f6f6;"></div>
<svg style="position:absolute;left:143px;top:297px" width="14" height="15"><path d="M1.5 1.5 L7.5 1.5 L10.5 4.5 L10.5 12.5 L1.5 12.5 Z" fill="#fff" stroke="#666"/><circle cx="9.5" cy="11.5" r="3" fill="#e03a1a"/></svg>
<div style="position:absolute;left:159px;top:299.3px;font-size:10.4px;color:#101018;white-space:pre;line-height:1;transform:scaleX(0.84);transform-origin:left top;-webkit-text-stroke:0.25px #101018;">1353492...</div>
<div style="position:absolute;right:709px;top:299.3px;font-size:10.4px;color:#101018;white-space:pre;line-height:1;transform:scaleX(0.84);transform-origin:right top;-webkit-text-stroke:0.25px #101018;">2017.09.25 17:58:07</div>
<div style="position:absolute;right:658px;top:299.3px;font-size:10.4px;color:#101018;white-space:pre;line-height:1;transform:scaleX(0.84);transform-origin:right top;-webkit-text-stroke:0.25px #101018;">sell</div>
<div style="position:absolute;right:616px;top:299.3px;font-size:10.4px;color:#101018;white-space:pre;line-height:1;transform:scaleX(0.84);transform-origin:right top;-webkit-text-stroke:0.25px #101018;">0.01</div>
<div style="position:absolute;right:567px;top:299.3px;font-size:10.4px;color:#101018;white-space:pre;line-height:1;transform:scaleX(0.84);transform-origin:right top;-webkit-text-stroke:0.25px #101018;">eurjpy</div>
<div style="position:absolute;right:516px;top:299.3px;font-size:10.4px;color:#101018;white-space:pre;line-height:1;transform:scaleX(0.84);transform-origin:right top;-webkit-text-stroke:0.25px #101018;">132.676</div>
<div style="position:absolute;right:466px;top:299.3px;font-size:10.4px;color:#101018;white-space:pre;line-height:1;transform:scaleX(0.84);transform-origin:right top;-webkit-text-stroke:0.25px #101018;">132.631</div>
<div style="position:absolute;right:415px;top:299.3px;font-size:10.4px;color:#101018;white-space:pre;line-height:1;transform:scaleX(0.84);transform-origin:right top;-webkit-text-stroke:0.25px #101018;">0.000</div>
<div style="position:absolute;right:304px;top:299.3px;font-size:10.4px;color:#101018;white-space:pre;line-height:1;transform:scaleX(0.84);transform-origin:right top;-webkit-text-stroke:0.25px #101018;">2017.09.25 18:00:07</div>
<div style="position:absolute;right:253px;top:299.3px;font-size:10.4px;color:#101018;white-space:pre;line-height:1;transform:scaleX(0.84);transform-origin:right top;-webkit-text-stroke:0.25px #101018;">132.631</div>
<div style="position:absolute;right:203px;top:299.3px;font-size:10.4px;color:#101018;white-space:pre;line-height:1;transform:scaleX(0.84);transform-origin:right top;-webkit-text-stroke:0.25px #101018;">0.00</div>
<div style="position:absolute;right:141px;top:299.3px;font-size:10.4px;color:#101018;white-space:pre;line-height:1;transform:scaleX(0.84);transform-origin:right top;-webkit-text-stroke:0.25px #101018;">0.40</div>
<div style="position:absolute;left:141px;top:312px;width:745px;height:16px;background:#ffffff;border-bottom:1px solid #f4f4f4;"></div>
<div style="position:absolute;left:511px;top:312px;width:49px;height:16px;background:#f99c9c;"></div>
<div style="position:absolute;left:206px;top:312px;width:1px;height:16px;background:#ececec;"></div>
<div style="position:absolute;left:318px;top:312px;width:1px;height:16px;background:#ececec;"></div>
<div style="position:absolute;left:369px;top:312px;width:1px;height:16px;background:#ececec;"></div>
<div style="position:absolute;left:411px;top:312px;width:1px;height:16px;background:#ececec;"></div>
<div style="position:absolute;left:460px;top:312px;width:1px;height:16px;background:#ececec;"></div>
<div style="position:absolute;left:511px;top:312px;width:1px;height:16px;background:#ececec;"></div>
<div style="position:absolute;left:561px;top:312px;width:1px;height:16px;background:#ececec;"></div>
<div style="position:absolute;left:612px;top:312px;width:1px;height:16px;background:#ececec;"></div>
<div style="position:absolute;left:723px;top:312px;width:1px;height:16px;background:#ececec;"></div>
<div style="position:absolute;left:774px;top:312px;width:1px;height:16px;background:#ececec;"></div>
<div style="position:absolute;left:824px;top:312px;width:1px;height:16px;background:#ececec;"></div>
<svg style="position:absolute;left:143px;top:313px" width="14" height="15"><path d="M1.5 1.5 L7.5 1.5 L10.5 4.5 L10.5 12.5 L1.5 12.5 Z" fill="#fff" stroke="#666"/><circle cx="9.5" cy="11.5" r="3" fill="#2a7fd8"/></svg>
<div style="position:absolute;left:159px;top:315.3px;font-size:10.4px;color:#101018;white-space:pre;line-height:1;transform:scaleX(0.84);transform-origin:left top;-webkit-text-stroke:0.25px #101018;">1353523...</div>
<div style="position:absolute;right:709px;top:315.3px;font-size:10.4px;color:#101018;white-space:pre;line-height:1;transform:scaleX(0.84);transform-origin:right top;-webkit-text-stroke:0.25px #101018;">2017.09.25 19:07:56</div>
<div style="position:absolute;right:658px;top:315.3px;font-size:10.4px;color:#101018;white-space:pre;line-height:1;transform:scaleX(0.84);transform-origin:right top;-webkit-text-stroke:0.25px #101018;">buy</div>
<div style="position:absolute;right:616px;top:315.3px;font-size:10.4px;color:#101018;white-space:pre;line-height:1;transform:scaleX(0.84);transform-origin:right top;-webkit-text-stroke:0.25px #101018;">0.01</div>
<div style="position:absolute;right:567px;top:315.3px;font-size:10.4px;color:#101018;white-space:pre;line-height:1;transform:scaleX(0.84);transform-origin:right top;-webkit-text-stroke:0.25px #101018;">gbpusd</div>
<div style="position:absolute;right:516px;top:315.3px;font-size:10.4px;color:#101018;white-space:pre;line-height:1;transform:scaleX(0.84);transform-origin:right top;-webkit-text-stroke:0.25px #101018;">1.34609</div>
<div style="position:absolute;right:466px;top:315.3px;font-size:10.4px;color:#101018;white-space:pre;line-height:1;transform:scaleX(0.84);transform-origin:right top;-webkit-text-stroke:0.25px #101018;">1.34621</div>
<div style="position:absolute;right:415px;top:315.3px;font-size:10.4px;color:#101018;white-space:pre;line-height:1;transform:scaleX(0.84);transform-origin:right top;-webkit-text-stroke:0.25px #101018;">0.00000</div>
<div style="position:absolute;right:304px;top:315.3px;font-size:10.4px;color:#101018;white-space:pre;line-height:1;transform:scaleX(0.84);transform-origin:right top;-webkit-text-stroke:0.25px #101018;">2017.09.25 19:08:11</div>
<div style="position:absolute;right:253px;top:315.3px;font-size:10.4px;color:#101018;white-space:pre;line-height:1;transform:scaleX(0.84);transform-origin:right top;-webkit-text-stroke:0.25px #101018;">1.34621</div>
<div style="position:absolute;right:203px;top:315.3px;font-size:10.4px;color:#101018;white-space:pre;line-height:1;transform:scaleX(0.84);transform-origin:right top;-webkit-text-stroke:0.25px #101018;">0.00</div>
<div style="position:absolute;right:141px;top:315.3px;font-size:10.4px;color:#101018;white-space:pre;line-height:1;transform:scaleX(0.84);transform-origin:right top;-webkit-text-stroke:0.25px #101018;">0.12</div>
<div style="position:absolute;left:141px;top:328px;width:745px;height:16px;background:#ebebeb;border-bottom:1px solid #f4f4f4;"></div>
<div style="position:absolute;left:511px;top:328px;width:49px;height:16px;background:#f99c9c;"></div>
<div style="position:absolute;left:206px;top:328px;width:1px;height:16px;background:#f6f6f6;"></div>
<div style="position:absolute;left:318px;top:328px;width:1px;height:16px;background:#f6f6f6;"></div>
<div style="position:absolute;left:369px;top:328px;width:1px;height:16px;background:#f6f6f6;"></div>
<div style="position:absolute;left:411px;top:328px;width:1px;height:16px;background:#f6f6f6;"></div>
<div style="position:absolute;left:460px;top:328px;width:1px;height:16px;background:#f6f6f6;"></div>
<div style="position:absolute;left:511px;top:328px;width:1px;height:16px;background:#f6f6f6;"></div>
<div style="position:absolute;left:561px;top:328px;width:1px;height:16px;background:#f6f6f6;"></div>
<div style="position:absolute;left:612px;top:328px;width:1px;height:16px;background:#f6f6f6;"></div>
<div style="position:absolute;left:723px;top:328px;width:1px;height:16px;background:#f6f6f6;"></div>
<div style="position:absolute;left:774px;top:328px;width:1px;height:16px;background:#f6f6f6;"></div>
<div style="position:absolute;left:824px;top:328px;width:1px;height:16px;background:#f6f6f6;"></div>
<svg style="position:absolute;left:143px;top:329px" width="14" height="15"><path d="M1.5 1.5 L7.5 1.5 L10.5 4.5 L10.5 12.5 L1.5 12.5 Z" fill="#fff" stroke="#666"/><circle cx="9.5" cy="11.5" r="3" fill="#2a7fd8"/></svg>
<div style="position:absolute;left:159px;top:331.3px;font-size:10.4px;color:#101018;white-space:pre;line-height:1;transform:scaleX(0.84);transform-origin:left top;-webkit-text-stroke:0.25px #101018;">1353518...</div>
<div style="position:absolute;right:709px;top:331.3px;font-size:10.4px;color:#101018;white-space:pre;line-height:1;transform:scaleX(0.84);transform-origin:right top;-webkit-text-stroke:0.25px #101018;">2017.09.25 18:59:59</div>
<div style="position:absolute;right:658px;top:331.3px;font-size:10.4px;color:#101018;white-space:pre;line-height:1;transform:scaleX(0.84);transform-origin:right top;-webkit-text-stroke:0.25px #101018;">buy</div>
<div style="position:absolute;right:616px;top:331.3px;font-size:10.4px;color:#101018;white-space:pre;line-height:1;transform:scaleX(0.84);transform-origin:right top;-webkit-text-stroke:0.25px #101018;">0.01</div>
<div style="position:absolute;right:567px;top:331.3px;font-size:10.4px;color:#101018;white-space:pre;line-height:1;transform:scaleX(0.84);transform-origin:right top;-webkit-text-stroke:0.25px #101018;">gbpusd</div>
<div style="position:absolute;right:516px;top:331.3px;font-size:10.4px;color:#101018;white-space:pre;line-height:1;transform:scaleX(0.84);transform-origin:right top;-webkit-text-stroke:0.25px #101018;">1.34534</div>
<div style="position:absolute;right:466px;top:331.3px;font-size:10.4px;color:#101018;white-space:pre;line-height:1;transform:scaleX(0.84);transform-origin:right top;-webkit-text-stroke:0.25px #101018;">1.34546</div>
<div style="position:absolute;right:415px;top:331.3px;font-size:10.4px;color:#101018;white-space:pre;line-height:1;transform:scaleX(0.84);transform-origin:right top;-webkit-text-stroke:0.25px #101018;">0.00000</div>
<div style="position:absolute;right:304px;top:331.3px;font-size:10.4px;color:#101018;white-space:pre;line-height:1;transform:scaleX(0.84);transform-origin:right top;-webkit-text-stroke:0.25px #101018;">2017.09.25 19:00:05</div>
<div style="position:absolute;right:253px;top:331.3px;font-size:10.4px;color:#101018;white-space:pre;line-height:1;transform:scaleX(0.84);transform-origin:right top;-webkit-text-stroke:0.25px #101018;">1.34546</div>
<div style="position:absolute;right:203px;top:331.3px;font-size:10.4px;color:#101018;white-space:pre;line-height:1;transform:scaleX(0.84);transform-origin:right top;-webkit-text-stroke:0.25px #101018;">0.00</div>
<div style="position:absolute;right:141px;top:331.3px;font-size:10.4px;color:#101018;white-space:pre;line-height:1;transform:scaleX(0.84);transform-origin:right top;-webkit-text-stroke:0.25px #101018;">0.12</div>
<div style="position:absolute;left:141px;top:344px;width:745px;height:16px;background:#ffffff;border-bottom:1px solid #f4f4f4;"></div>
<div style="position:absolute;left:511px;top:344px;width:49px;height:16px;background:#f99c9c;"></div>
<div style="position:absolute;left:206px;top:344px;width:1px;height:16px;background:#ececec;"></div>
<div style="position:absolute;left:318px;top:344px;width:1px;height:16px;background:#ececec;"></div>
<div style="position:absolute;left:369px;top:344px;width:1px;height:16px;background:#ececec;"></div>
<div style="position:absolute;left:411px;top:344px;width:1px;height:16px;background:#ececec;"></div>
<div style="position:absolute;left:460px;top:344px;width:1px;height:16px;background:#ececec;"></div>
<div style="position:absolute;left:511px;top:344px;width:1px;height:16px;background:#ececec;"></div>
<div style="position:absolute;left:561px;top:344px;width:1px;height:16px;background:#ececec;"></div>
<div style="position:absolute;left:612px;top:344px;width:1px;height:16px;background:#ececec;"></div>
<div style="position:absolute;left:723px;top:344px;width:1px;height:16px;background:#ececec;"></div>
<div style="position:absolute;left:774px;top:344px;width:1px;height:16px;background:#ececec;"></div>
<div style="position:absolute;left:824px;top:344px;width:1px;height:16px;background:#ececec;"></div>
<svg style="position:absolute;left:143px;top:345px" width="14" height="15"><path d="M1.5 1.5 L7.5 1.5 L10.5 4.5 L10.5 12.5 L1.5 12.5 Z" fill="#fff" stroke="#666"/><circle cx="9.5" cy="11.5" r="3" fill="#e03a1a"/></svg>
<div style="position:absolute;left:159px;top:347.3px;font-size:10.4px;color:#101018;white-space:pre;line-height:1;transform:scaleX(0.84);transform-origin:left top;-webkit-text-stroke:0.25px #101018;">1353483...</div>
<div style="position:absolute;right:709px;top:347.3px;font-size:10.4px;color:#101018;white-space:pre;line-height:1;transform:scaleX(0.84);transform-origin:right top;-webkit-text-stroke:0.25px #101018;">2017.09.25 17:49:57</div>
<div style="position:absolute;right:658px;top:347.3px;font-size:10.4px;color:#101018;white-space:pre;line-height:1;transform:scaleX(0.84);transform-origin:right top;-webkit-text-stroke:0.25px #101018;">sell</div>
<div style="position:absolute;right:616px;top:347.3px;font-size:10.4px;color:#101018;white-space:pre;line-height:1;transform:scaleX(0.84);transform-origin:right top;-webkit-text-stroke:0.25px #101018;">0.01</div>
<div style="position:absolute;right:567px;top:347.3px;font-size:10.4px;color:#101018;white-space:pre;line-height:1;transform:scaleX(0.84);transform-origin:right top;-webkit-text-stroke:0.25px #101018;">eurjpy</div>
<div style="position:absolute;right:516px;top:347.3px;font-size:10.4px;color:#101018;white-space:pre;line-height:1;transform:scaleX(0.84);transform-origin:right top;-webkit-text-stroke:0.25px #101018;">133.278</div>
<div style="position:absolute;right:466px;top:347.3px;font-size:10.4px;color:#101018;white-space:pre;line-height:1;transform:scaleX(0.84);transform-origin:right top;-webkit-text-stroke:0.25px #101018;">133.267</div>
<div style="position:absolute;right:415px;top:347.3px;font-size:10.4px;color:#101018;white-space:pre;line-height:1;transform:scaleX(0.84);transform-origin:right top;-webkit-text-stroke:0.25px #101018;">0.000</div>
<div style="position:absolute;right:304px;top:347.3px;font-size:10.4px;color:#101018;white-space:pre;line-height:1;transform:scaleX(0.84);transform-origin:right top;-webkit-text-stroke:0.25px #101018;">2017.09.25 17:50:06</div>
<div style="position:absolute;right:253px;top:347.3px;font-size:10.4px;color:#101018;white-space:pre;line-height:1;transform:scaleX(0.84);transform-origin:right top;-webkit-text-stroke:0.25px #101018;">133.267</div>
<div style="position:absolute;right:203px;top:347.3px;font-size:10.4px;color:#101018;white-space:pre;line-height:1;transform:scaleX(0.84);transform-origin:right top;-webkit-text-stroke:0.25px #101018;">0.00</div>
<div style="position:absolute;right:141px;top:347.3px;font-size:10.4px;color:#101018;white-space:pre;line-height:1;transform:scaleX(0.84);transform-origin:right top;-webkit-text-stroke:0.25px #101018;">0.10</div>
<div style="position:absolute;left:141px;top:360px;width:745px;height:16px;background:#ebebeb;border-bottom:1px solid #f4f4f4;"></div>
<div style="position:absolute;left:511px;top:360px;width:49px;height:16px;background:#f99c9c;"></div>
<div style="position:absolute;left:206px;top:360px;width:1px;height:16px;background:#f6f6f6;"></div>
<div style="position:absolute;left:318px;top:360px;width:1px;height:16px;background:#f6f6f6;"></div>
<div style="position:absolute;left:369px;top:360px;width:1px;height:16px;background:#f6f6f6;"></div>
<div style="position:absolute;left:411px;top:360px;width:1px;height:16px;background:#f6f6f6;"></div>
<div style="position:absolute;left:460px;top:360px;width:1px;height:16px;background:#f6f6f6;"></div>
<div style="position:absolute;left:511px;top:360px;width:1px;height:16px;background:#f6f6f6;"></div>
<div style="position:absolute;left:561px;top:360px;width:1px;height:16px;background:#f6f6f6;"></div>
<div style="position:absolute;left:612px;top:360px;width:1px;height:16px;background:#f6f6f6;"></div>
<div style="position:absolute;left:723px;top:360px;width:1px;height:16px;background:#f6f6f6;"></div>
<div style="position:absolute;left:774px;top:360px;width:1px;height:16px;background:#f6f6f6;"></div>
<div style="position:absolute;left:824px;top:360px;width:1px;height:16px;background:#f6f6f6;"></div>
<svg style="position:absolute;left:143px;top:361px" width="14" height="15"><path d="M1.5 1.5 L7.5 1.5 L10.5 4.5 L10.5 12.5 L1.5 12.5 Z" fill="#fff" stroke="#666"/><circle cx="9.5" cy="11.5" r="3" fill="#e03a1a"/></svg>
<div style="position:absolute;left:159px;top:363.3px;font-size:10.4px;color:#101018;white-space:pre;line-height:1;transform:scaleX(0.84);transform-origin:left top;-webkit-text-stroke:0.25px #101018;">1353497...</div>
<div style="position:absolute;right:709px;top:363.3px;font-size:10.4px;color:#101018;white-space:pre;line-height:1;transform:scaleX(0.84);transform-origin:right top;-webkit-text-stroke:0.25px #101018;">2017.09.25 18:04:50</div>
<div style="position:absolute;right:658px;top:363.3px;font-size:10.4px;color:#101018;white-space:pre;line-height:1;transform:scaleX(0.84);transform-origin:right top;-webkit-text-stroke:0.25px #101018;">sell</div>
<div style="position:absolute;right:616px;top:363.3px;font-size:10.4px;color:#101018;white-space:pre;line-height:1;transform:scaleX(0.84);transform-origin:right top;-webkit-text-stroke:0.25px #101018;">0.01</div>
<div style="position:absolute;right:567px;top:363.3px;font-size:10.4px;color:#101018;white-space:pre;line-height:1;transform:scaleX(0.84);transform-origin:right top;-webkit-text-stroke:0.25px #101018;">gbpusd</div>
<div style="position:absolute;right:516px;top:363.3px;font-size:10.4px;color:#101018;white-space:pre;line-height:1;transform:scaleX(0.84);transform-origin:right top;-webkit-text-stroke:0.25px #101018;">1.34898</div>
<div style="position:absolute;right:466px;top:363.3px;font-size:10.4px;color:#101018;white-space:pre;line-height:1;transform:scaleX(0.84);transform-origin:right top;-webkit-text-stroke:0.25px #101018;">1.35014</div>
<div style="position:absolute;right:415px;top:363.3px;font-size:10.4px;color:#101018;white-space:pre;line-height:1;transform:scaleX(0.84);transform-origin:right top;-webkit-text-stroke:0.25px #101018;">0.00000</div>
<div style="position:absolute;right:304px;top:363.3px;font-size:10.4px;color:#101018;white-space:pre;line-height:1;transform:scaleX(0.84);transform-origin:right top;-webkit-text-stroke:0.25px #101018;">2017.09.25 18:08:58</div>
<div style="position:absolute;right:253px;top:363.3px;font-size:10.4px;color:#101018;white-space:pre;line-height:1;transform:scaleX(0.84);transform-origin:right top;-webkit-text-stroke:0.25px #101018;">1.35014</div>
<div style="position:absolute;right:203px;top:363.3px;font-size:10.4px;color:#101018;white-space:pre;line-height:1;transform:scaleX(0.84);transform-origin:right top;-webkit-text-stroke:0.25px #101018;">0.00</div>
<div style="position:absolute;right:141px;top:363.3px;font-size:10.4px;color:#101018;white-space:pre;line-height:1;transform:scaleX(0.84);transform-origin:right top;-webkit-text-stroke:0.25px #101018;">-1.16</div>
<div style="position:absolute;left:141px;top:376px;width:745px;height:16px;background:#c9c9c9;"></div>
<svg style="position:absolute;left:146px;top:379px" width="10" height="10"><circle cx="5" cy="5" r="3.5" fill="#d8d8d8" stroke="#8a8a8a"/></svg>
<div style="position:absolute;left:159px;top:378px;font-size:10.6px;color:#000;white-space:pre;line-height:1;transform:scaleX(0.887);transform-origin:left top;font-weight:bold;">Profit/Loss: 1.78  Credit: 0.00  Deposit: 11.78  Withdrawal: 0.00</div>
<div style="position:absolute;right:140px;top:378px;font-size:10.6px;color:#000;white-space:pre;line-height:1;transform:scaleX(0.887);transform-origin:right top;font-weight:bold;">13.56</div>
<div style="position:absolute;left:141px;top:489px;width:748px;height:2px;background:#6a6a6a;"></div>
<div style="position:absolute;left:141px;top:491px;width:748px;height:15px;background:#efefef;"></div>
<div style="position:absolute;left:236px;top:489px;width:85px;height:17px;background:#fff;border-left:1px solid #333;border-right:1px solid #333;border-bottom:2px solid #333;"></div>
<div style="position:absolute;left:151px;top:493.4px;font-size:10.4px;color:#666;white-space:pre;line-height:1;transform:scaleX(0.87);transform-origin:left top;-webkit-text-stroke:0.2px #666;">Trade</div>
<div style="position:absolute;left:191px;top:493.4px;font-size:10.4px;color:#666;white-space:pre;line-height:1;transform:scaleX(0.87);transform-origin:left top;-webkit-text-stroke:0.2px #666;">Exposure</div>
<div style="position:absolute;left:245px;top:493.4px;font-size:10.4px;color:#101018;white-space:pre;line-height:1;transform:scaleX(0.93);transform-origin:left top;-webkit-text-stroke:0.2px #101018;">Account History</div>
<div style="position:absolute;left:329px;top:493.4px;font-size:10.4px;color:#666;white-space:pre;line-height:1;transform:scaleX(0.87);transform-origin:left top;-webkit-text-stroke:0.2px #666;">News</div>
<div style="position:absolute;left:354px;top:498px;font-size:6.5px;color:#e02020;white-space:pre;line-height:1;font-weight:bold;">99</div>
<div style="position:absolute;left:378px;top:493.4px;font-size:10.4px;color:#666;white-space:pre;line-height:1;transform:scaleX(0.87);transform-origin:left top;-webkit-text-stroke:0.2px #666;">Alerts</div>
<div style="position:absolute;left:418px;top:493.4px;font-size:10.4px;color:#666;white-space:pre;line-height:1;transform:scaleX(0.87);transform-origin:left top;-webkit-text-stroke:0.2px #666;">Mailbox</div>
<div style="position:absolute;left:453px;top:498px;font-size:6.5px;color:#e02020;white-space:pre;line-height:1;font-weight:bold;">9</div>
<div style="position:absolute;left:473px;top:493.4px;font-size:10.4px;color:#666;white-space:pre;line-height:1;transform:scaleX(0.87);transform-origin:left top;-webkit-text-stroke:0.2px #666;">Market</div>
<div style="position:absolute;left:504px;top:498px;font-size:6.5px;color:#e02020;white-space:pre;line-height:1;font-weight:bold;">75</div>
<div style="position:absolute;left:528px;top:493.4px;font-size:10.4px;color:#666;white-space:pre;line-height:1;transform:scaleX(0.87);transform-origin:left top;-webkit-text-stroke:0.2px #666;">Signals</div>
<div style="position:absolute;left:574px;top:493.4px;font-size:10.4px;color:#666;white-space:pre;line-height:1;transform:scaleX(0.87);transform-origin:left top;-webkit-text-stroke:0.2px #666;">Code Base</div>
<div style="position:absolute;left:634px;top:493.4px;font-size:10.4px;color:#666;white-space:pre;line-height:1;transform:scaleX(0.87);transform-origin:left top;-webkit-text-stroke:0.2px #666;">Experts</div>
<div style="position:absolute;left:680px;top:493.4px;font-size:10.4px;color:#666;white-space:pre;line-height:1;transform:scaleX(0.87);transform-origin:left top;-webkit-text-stroke:0.2px #666;">Journal</div>
<div style="position:absolute;left:183px;top:492px;width:1px;height:12px;background:#777;"></div>
<div style="position:absolute;left:370px;top:492px;width:1px;height:12px;background:#777;"></div>
<div style="position:absolute;left:410px;top:492px;width:1px;height:12px;background:#777;"></div>
<div style="position:absolute;left:466px;top:492px;width:1px;height:12px;background:#777;"></div>
<div style="position:absolute;left:521px;top:492px;width:1px;height:12px;background:#777;"></div>
<div style="position:absolute;left:566px;top:492px;width:1px;height:12px;background:#777;"></div>
<div style="position:absolute;left:626px;top:492px;width:1px;height:12px;background:#777;"></div>
<div style="position:absolute;left:672px;top:492px;width:1px;height:12px;background:#777;"></div>
<div style="position:absolute;left:719px;top:492px;width:1px;height:12px;background:#777;"></div>
<div style="position:absolute;left:0px;top:604px;width:1024px;height:2px;background:#c4c4c4;"></div>
<div style="position:absolute;left:0px;top:606px;width:1024px;height:16px;background:#f0f0f0;"></div>
<div style="position:absolute;left:72px;top:605px;width:72px;height:16px;background:#fff;border-left:1px solid #333;border-right:1px solid #333;border-bottom:2px solid #333;"></div>
<div style="position:absolute;left:13px;top:608.2px;font-size:10.2px;color:#8a8a8a;white-space:pre;line-height:1;transform:scaleX(0.84);transform-origin:left top;-webkit-text-stroke:0.2px #8a8a8a;">EURUSD,M5</div>
<div style="position:absolute;left:82px;top:608.2px;font-size:10.2px;color:#101018;white-space:pre;line-height:1;transform:scaleX(0.84);transform-origin:left top;-webkit-text-stroke:0.3px #101018;">GBPUSD,M5</div>
<div style="position:absolute;left:151px;top:608.2px;font-size:10.2px;color:#8a8a8a;white-space:pre;line-height:1;transform:scaleX(0.84);transform-origin:left top;-webkit-text-stroke:0.2px #8a8a8a;">NZDUSD,M5</div>
<div style="position:absolute;left:213px;top:608px;width:1px;height:12px;background:#999;"></div>
<div style="position:absolute;left:222px;top:608.2px;font-size:10.2px;color:#8a8a8a;white-space:pre;line-height:1;transform:scaleX(0.84);transform-origin:left top;-webkit-text-stroke:0.2px #8a8a8a;">USDJPY,M5</div>
<div style="position:absolute;left:281px;top:608px;width:1px;height:12px;background:#999;"></div>
<svg style="position:absolute;left:996px;top:609px" width="22" height="6"><path d="M4 0.5L2 3L4 5.5M18 0.5L20 3L18 5.5" stroke="#556" stroke-width="1.2" fill="none"/></svg>
<div style="position:absolute;left:0px;top:622px;width:1024px;height:18px;background:#f0f0f0;border-top:1px solid #e4e4e4;"></div>
<div style="position:absolute;left:2px;top:625.6px;font-size:10.4px;color:#101018;white-space:pre;line-height:1;transform:scaleX(0.86);transform-origin:left top;-webkit-text-stroke:0.25px #101018;">For Help, press F1</div>
<div style="position:absolute;left:474px;top:626.4px;font-size:9.8px;color:#101018;white-space:pre;line-height:1;transform:scaleX(0.9);transform-origin:left top;-webkit-text-stroke:0.2px #101018;">Default</div>
<div style="position:absolute;left:470px;top:624px;width:2px;height:16px;border-left:1px solid #a8a8a8;border-right:1px solid #fff;"></div>
<div style="position:absolute;left:562px;top:624px;width:2px;height:16px;border-left:1px solid #a8a8a8;border-right:1px solid #fff;"></div>
<div style="position:absolute;left:643px;top:624px;width:2px;height:16px;border-left:1px solid #a8a8a8;border-right:1px solid #fff;"></div>
<div style="position:absolute;left:700px;top:624px;width:2px;height:16px;border-left:1px solid #a8a8a8;border-right:1px solid #fff;"></div>
<div style="position:absolute;left:757px;top:624px;width:2px;height:16px;border-left:1px solid #a8a8a8;border-right:1px solid #fff;"></div>
<div style="position:absolute;left:812px;top:624px;width:2px;height:16px;border-left:1px solid #a8a8a8;border-right:1px solid #fff;"></div>
<div style="position:absolute;left:867px;top:624px;width:2px;height:16px;border-left:1px solid #a8a8a8;border-right:1px solid #fff;"></div>
<div style="position:absolute;left:0px;top:639px;width:1024px;height:1px;background:#c8c8c8;"></div>
<div style="position:absolute;left:3px;top:37px;width:2px;height:16px;border-left:1px solid #c0c0c0;border-right:1px solid #fff;"></div>
<svg style="position:absolute;left:8px;top:38px" width="17" height="16" viewBox="0 0 17 16"><rect x="0.5" y="0.5" width="11" height="10" rx="1.5" fill="#b8d4f2" stroke="#5b8fd0"/><rect x="2" y="2" width="5" height="3" fill="#e8f2fc"/><path d="M10 5V15M5 10H15" stroke="#22c022" stroke-width="3.2"/></svg>
<svg style="position:absolute;left:27px;top:46px" width="5" height="3" viewBox="0 0 5 3"><path d="M0 0L5 0L2.5 3Z" fill="#111"/></svg>
<svg style="position:absolute;left:37px;top:38px" width="16" height="15" viewBox="0 0 16 15"><rect x="0.5" y="0.5" width="11" height="9" rx="1.5" fill="#c6dcf4" stroke="#5b8fd0"/><rect x="3.5" y="4.5" width="11" height="9" rx="1.5" fill="#d2e4f8" stroke="#5b8fd0"/></svg>
<svg style="position:absolute;left:56px;top:46px" width="5" height="3" viewBox="0 0 5 3"><path d="M0 0L5 0L2.5 3Z" fill="#111"/></svg>
<div style="position:absolute;left:66px;top:37px;width:2px;height:16px;border-left:1px solid #b8b8b8;border-right:1px solid #fff;"></div>
<svg style="position:absolute;left:72px;top:38px" width="15" height="15" viewBox="0 0 15 15"><rect x="0.5" y="0.5" width="13" height="13" rx="2" fill="#fff" stroke="#6aa0e0" stroke-width="1.4"/><circle cx="5" cy="5.5" r="2" fill="#22b022"/><circle cx="9" cy="9" r="2.2" fill="#f07030"/></svg>
<svg style="position:absolute;left:96px;top:39px" width="14" height="14" viewBox="0 0 14 14"><path d="M7 0L14 7L7 14L0 7Z" fill="#888"/><path d="M7 3L11 7L7 11L3 7Z" fill="#f0f0f0"/><path d="M7 1V13M1 7H13" stroke="#555" stroke-width="1"/></svg>
<div style="position:absolute;left:113px;top:36px;width:21px;height:19px;background:#f9f9f9;border:1px solid #d6d6d6;"></div>
<svg style="position:absolute;left:115px;top:39px" width="17" height="15" viewBox="0 0 17 15"><path d="M1 2 L6 2 L8 4 L13 4 L13 10 L1 10Z" fill="#f4e070" stroke="#d0b030"/><path d="M11 6 L12.5 9 L16 9.3 L13.3 11.5 L14.2 15 L11 13 L7.8 15 L8.7 11.5 L6 9.3 L9.5 9Z" fill="#f0c820" stroke="#c89a10" stroke-width="0.6"/></svg>
<div style="position:absolute;left:137px;top:36px;width:21px;height:19px;background:#f9f9f9;border:1px solid #d6d6d6;"></div>
<svg style="position:absolute;left:140px;top:39px" width="15" height="14" viewBox="0 0 15 14"><rect x="0.5" y="0.5" width="14" height="13" rx="1.5" fill="#fff" stroke="#3a7ad0" stroke-width="1.4"/><rect x="1" y="1" width="3" height="12" fill="#2a6ac0"/><path d="M6 4H12M6 7H12M6 10H12" stroke="#c0d4ec"/></svg>
<svg style="position:absolute;left:162px;top:38px" width="16" height="16" viewBox="0 0 16 16"><rect x="0.5" y="0.5" width="12" height="12" rx="1" fill="#e4e4e4" stroke="#b0b0b0"/><circle cx="7" cy="7" r="4" fill="#d8ecff" stroke="#3a8ad8" stroke-width="1.4"/><path d="M10 10L15 15" stroke="#e0a020" stroke-width="2.2"/></svg>
<div style="position:absolute;left:183px;top:37px;width:2px;height:16px;border-left:1px solid #b8b8b8;border-right:1px solid #fff;"></div>
<svg style="position:absolute;left:189px;top:38px" width="14" height="16" viewBox="0 0 14 16"><path d="M0.5 0.5H7.5L10.5 3.5V13.5H0.5Z" fill="#f4f4f4" stroke="#999"/><path d="M2 4H7M2 7H8" stroke="#bbb"/><path d="M8.5 6V16M3.5 11H13.5" stroke="#22c022" stroke-width="3"/></svg>
<div style="position:absolute;left:206px;top:40.5px;font-size:10.6px;color:#101018;white-space:pre;line-height:1;transform:scaleX(0.87);transform-origin:left top;-webkit-text-stroke:0.25px #101018;">New Order</div>
<svg style="position:absolute;left:261px;top:39px" width="15" height="14" viewBox="0 0 15 14"><path d="M1 7 L7 1 L14 6 L8 13Z" fill="#c8901a" stroke="#8a5a08" stroke-width="0.8"/><path d="M3 7 L7 3 L12 6.5 L8 10.5Z" fill="#f4d060"/></svg>
<div style="position:absolute;left:281px;top:36px;width:77px;height:19px;background:#f9f9f9;border:1px solid #d6d6d6;"></div>
<svg style="position:absolute;left:284px;top:38px" width="16" height="16" viewBox="0 0 16 16"><ellipse cx="6.5" cy="5" rx="6" ry="4" fill="#4a9ae0"/><ellipse cx="6" cy="4" rx="3.5" ry="2" fill="#b0daf8"/><path d="M2 8 L11 8 L10 14 L3 14Z" fill="#f0c030"/><circle cx="11.5" cy="11.5" r="4" fill="#20b030" stroke="#fff"/><path d="M10.5 9.5V13.5L13.5 11.5Z" fill="#fff"/></svg>
<div style="position:absolute;left:300px;top:40.5px;font-size:10.6px;color:#101018;white-space:pre;line-height:1;transform:scaleX(0.92);transform-origin:left top;-webkit-text-stroke:0.25px #101018;">AutoTrading</div>
<div style="position:absolute;left:364px;top:37px;width:2px;height:16px;border-left:1px solid #b8b8b8;border-right:1px solid #fff;"></div>
<svg style="position:absolute;left:372px;top:39px" width="12" height="14" viewBox="0 0 12 14"><path d="M2 1V12M5 4V13M8 6V12" stroke="#555" stroke-width="1.2"/><path d="M1 12.5H11" stroke="#555"/><path d="M5 5 L8 3" stroke="#2a9a2a" stroke-width="1.4"/></svg>
<div style="position:absolute;left:390px;top:36px;width:21px;height:19px;background:#f9f9f9;border:1px solid #d6d6d6;"></div>
<svg style="position:absolute;left:394px;top:39px" width="14" height="14" viewBox="0 0 14 14"><path d="M3 1V13M10 1V12" stroke="#555"/><rect x="5" y="3" width="4" height="7" fill="#22b022" stroke="#127012"/><path d="M1 12.5H13" stroke="#555"/></svg>
<svg style="position:absolute;left:419px;top:39px" width="13" height="14" viewBox="0 0 13 14"><path d="M1 1V12.5H12" stroke="#555" fill="none"/><path d="M2 9 Q5 2 8 6 T12 10" stroke="#2a9a2a" stroke-width="1.3" fill="none"/></svg>
<div style="position:absolute;left:436px;top:37px;width:2px;height:16px;border-left:1px solid #b8b8b8;border-right:1px solid #fff;"></div>
<svg style="position:absolute;left:443px;top:38px" width="14" height="15" viewBox="0 0 14 15"><circle cx="5.5" cy="5.5" r="4.8" fill="#d8ecff" stroke="#3a7ac8" stroke-width="1.4"/><path d="M9 9L13 13.5" stroke="#e0a020" stroke-width="2.4"/><path d="M3 5.5H8M5.5 3V8" stroke="#2a5aa8" stroke-width="1.4"/></svg>
<svg style="position:absolute;left:465px;top:38px" width="14" height="15" viewBox="0 0 14 15"><circle cx="5.5" cy="5.5" r="4.8" fill="#d8ecff" stroke="#3a7ac8" stroke-width="1.4"/><path d="M9 9L13 13.5" stroke="#e0a020" stroke-width="2.4"/><path d="M3 5.5H8" stroke="#2a5aa8" stroke-width="1.4"/></svg>
<svg style="position:absolute;left:487px;top:39px" width="14" height="14" viewBox="0 0 14 14"><rect x="0.5" y="0.5" width="6" height="6" fill="#2a8a2a" stroke="#1a5a9a"/><rect x="7.5" y="0.5" width="6" height="6" fill="#3a9ad8" stroke="#1a5a9a"/><rect x="0.5" y="7.5" width="6" height="6" fill="#3a9ad8" stroke="#1a5a9a"/><rect x="7.5" y="7.5" width="6" height="6" fill="#2a8a2a" stroke="#1a5a9a"/><rect x="2" y="2" width="3" height="2" fill="#fff"/><rect x="9" y="9" width="3" height="2" fill="#fff"/></svg>
<div style="position:absolute;left:508px;top:37px;width:2px;height:16px;border-left:1px solid #b8b8b8;border-right:1px solid #fff;"></div>
<div style="position:absolute;left:513px;top:36px;width:19px;height:19px;background:#f9f9f9;border:1px solid #d6d6d6;"></div>
<svg style="position:absolute;left:516px;top:39px" width="13" height="14" viewBox="0 0 13 14"><path d="M2 1V12.5H12" stroke="#555" fill="none"/><path d="M5 4L10 8L5 12Z" fill="#22a022"/></svg>
<div style="position:absolute;left:534px;top:36px;width:19px;height:19px;background:#f9f9f9;border:1px solid #d6d6d6;"></div>
<svg style="position:absolute;left:537px;top:39px" width="13" height="14" viewBox="0 0 13 14"><path d="M2 1V12.5H12M6 2V12" stroke="#555" fill="none"/><path d="M7 5L11 8L7 11Z" fill="#d02020"/></svg>
<div style="position:absolute;left:558px;top:37px;width:2px;height:16px;border-left:1px solid #b8b8b8;border-right:1px solid #fff;"></div>
<svg style="position:absolute;left:565px;top:38px" width="16" height="16" viewBox="0 0 16 16"><path d="M0.5 0.5H8L11 3.5V13.5H0.5Z" fill="#f4f4f4" stroke="#888"/><path d="M2 4L4 8L6 5L9 9" stroke="#777" fill="none"/><path d="M10 7V16M5.5 11.5H14.5" stroke="#22c022" stroke-width="2.8"/></svg>
<svg style="position:absolute;left:581px;top:46px" width="5" height="3" viewBox="0 0 5 3"><path d="M0 0L5 0L2.5 3Z" fill="#111"/></svg>
<svg style="position:absolute;left:592px;top:39px" width="13" height="13" viewBox="0 0 13 13"><circle cx="6.5" cy="6.5" r="5.5" fill="#fff" stroke="#1a5aa8" stroke-width="2"/><path d="M6.5 3.5V6.5L8.5 8" stroke="#1a3a6a" stroke-width="1.2" fill="none"/></svg>
<svg style="position:absolute;left:609px;top:46px" width="5" height="3" viewBox="0 0 5 3"><path d="M0 0L5 0L2.5 3Z" fill="#111"/></svg>
<svg style="position:absolute;left:622px;top:39px" width="15" height="13" viewBox="0 0 15 13"><rect x="0.5" y="0.5" width="14" height="12" rx="1" fill="#dceaf8" stroke="#4a82c8"/><path d="M2 9L5 5L8 8L13 3" stroke="#e04020" fill="none"/><path d="M2 6L6 8L9 5L13 7" stroke="#4a9a4a" fill="none"/></svg>
<svg style="position:absolute;left:640px;top:46px" width="5" height="3" viewBox="0 0 5 3"><path d="M0 0L5 0L2.5 3Z" fill="#111"/></svg>
<div style="position:absolute;left:651px;top:37px;width:1px;height:17px;background:#d0d0d0;"></div>
<svg style="position:absolute;left:984px;top:39px" width="10" height="12" viewBox="0 0 10 12"><circle cx="6" cy="4" r="3" fill="none" stroke="#1a5ad8" stroke-width="1.8"/><path d="M4 6.5L0.8 10.5" stroke="#1a4ac0" stroke-width="2.2"/></svg>
<svg style="position:absolute;left:1002px;top:39px" width="19" height="13" viewBox="0 0 19 13"><ellipse cx="12" cy="5" rx="6" ry="4" fill="#f4f4f4" stroke="#999"/><ellipse cx="7" cy="7" rx="6" ry="4" fill="#fafafa" stroke="#999"/><path d="M3 10L2 13L6 10.5" fill="#fafafa" stroke="#999"/></svg>
<div style="position:absolute;left:3px;top:59px;width:2px;height:16px;border-left:1px solid #c0c0c0;border-right:1px solid #fff;"></div>
<div style="position:absolute;left:10px;top:58px;width:17px;height:19px;background:#f9f9f9;border:1px solid #d6d6d6;"></div>
<svg style="position:absolute;left:14px;top:61px" width="8" height="13" viewBox="0 0 8 13"><path d="M1 1V11L3.5 8.5L5.5 12.5L7 11.8L5 8L8 8Z" fill="#111"/></svg>
<svg style="position:absolute;left:32px;top:61px" width="13" height="13" viewBox="0 0 13 13"><path d="M6.5 0V5M6.5 8V13M0 6.5H5M8 6.5H13" stroke="#555" stroke-width="1.1"/></svg>
<div style="position:absolute;left:52px;top:59px;width:2px;height:16px;border-left:1px solid #b8b8b8;border-right:1px solid #fff;"></div>
<div style="position:absolute;left:65px;top:62px;width:1px;height:10px;background:#555;"></div>
<div style="position:absolute;left:84px;top:67px;width:10px;height:1px;background:#555;"></div>
<svg style="position:absolute;left:105px;top:61px" width="12" height="13" viewBox="0 0 12 13"><path d="M1 12L11 1" stroke="#555" stroke-width="1.2"/></svg>
<svg style="position:absolute;left:127px;top:60px" width="14" height="15" viewBox="0 0 14 15"><path d="M1 9L8 2M3 12L11 4M6 13L12 7" stroke="#666" stroke-width="1.2"/><path d="M10 12V15H12" stroke="#333"/></svg>
<svg style="position:absolute;left:149px;top:60px" width="14" height="15" viewBox="0 0 14 15"><path d="M1 2H12M1 5H12M1 8H12M1 11H12" stroke="#888"/><path d="M9 12L12 12L10 15" stroke="#333"/></svg>
<div style="position:absolute;left:174px;top:62px;font-size:10px;color:#333;white-space:pre;line-height:1;font-weight:bold;">A</div>
<svg style="position:absolute;left:194px;top:60px" width="13" height="15" viewBox="0 0 13 15"><rect x="1.5" y="2.5" width="10" height="11" fill="#f6f6f6" stroke="#aaa" stroke-dasharray="1 1"/><path d="M3.5 5H9.5M6.5 5V12" stroke="#333" stroke-width="1.6"/></svg>
<svg style="position:absolute;left:216px;top:61px" width="14" height="13" viewBox="0 0 14 13"><path d="M1 1L5 5M5 5L4 2M5 5L2 4" stroke="#222" stroke-width="1.5"/><rect x="6" y="6" width="3" height="3" fill="#111"/><path d="M9 8L12 12" stroke="#222" stroke-width="1.6"/></svg>
<svg style="position:absolute;left:233px;top:67px" width="5" height="3" viewBox="0 0 5 3"><path d="M0 0L5 0L2.5 3Z" fill="#111"/></svg>
<div style="position:absolute;left:244px;top:59px;width:2px;height:16px;border-left:1px solid #c0c0c0;border-right:1px solid #fff;"></div>
<div style="position:absolute;left:274px;top:58px;width:19px;height:19px;background:#f9f9f9;border:1px solid #d6d6d6;"></div>
<div style="position:absolute;left:253px;top:64.3px;font-size:8.6px;color:#505050;white-space:pre;line-height:1;transform:scaleX(0.86);transform-origin:left top;-webkit-text-stroke:0.1px #505050;">M1</div>
<div style="position:absolute;left:277px;top:64.3px;font-size:8.6px;color:#505050;white-space:pre;line-height:1;transform:scaleX(0.86);transform-origin:left top;-webkit-text-stroke:0.1px #505050;">M5</div>
<div style="position:absolute;left:296px;top:64.3px;font-size:8.6px;color:#505050;white-space:pre;line-height:1;transform:scaleX(0.86);transform-origin:left top;-webkit-text-stroke:0.1px #505050;">M15</div>
<div style="position:absolute;left:319px;top:64.3px;font-size:8.6px;color:#505050;white-space:pre;line-height:1;transform:scaleX(0.86);transform-origin:left top;-webkit-text-stroke:0.1px #505050;">M30</div>
<div style="position:absolute;left:343px;top:64.3px;font-size:8.6px;color:#505050;white-space:pre;line-height:1;transform:scaleX(0.86);transform-origin:left top;-webkit-text-stroke:0.1px #505050;">H1</div>
<div style="position:absolute;left:365px;top:64.3px;font-size:8.6px;color:#505050;white-space:pre;line-height:1;transform:scaleX(0.86);transform-origin:left top;-webkit-text-stroke:0.1px #505050;">H4</div>
<div style="position:absolute;left:388px;top:64.3px;font-size:8.6px;color:#505050;white-space:pre;line-height:1;transform:scaleX(0.86);transform-origin:left top;-webkit-text-stroke:0.1px #505050;">D1</div>
<div style="position:absolute;left:410px;top:64.3px;font-size:8.6px;color:#505050;white-space:pre;line-height:1;transform:scaleX(0.86);transform-origin:left top;-webkit-text-stroke:0.1px #505050;">W1</div>
<div style="position:absolute;left:431px;top:64.3px;font-size:8.6px;color:#505050;white-space:pre;line-height:1;transform:scaleX(0.86);transform-origin:left top;-webkit-text-stroke:0.1px #505050;">MN</div>
<div style="position:absolute;left:450px;top:58px;width:1px;height:19px;background:#d0d0d0;"></div>
<div style="position:absolute;left:362px;top:0px;width:299px;height:28px;background:#fb7c1c;border-bottom:1px solid #f06010;"></div>
<svg style="position:absolute;left:457px;top:4px" width="21.5" height="21.5" viewBox="0 0 26 26"><rect x="0" y="0" width="26" height="26" rx="5.5" fill="#f23c0e"/><circle cx="13" cy="3.6" r="1.7" fill="#ffe8e0"/><rect x="12.4" y="4" width="1.2" height="3.5" fill="#ffe8e0"/><path d="M2.2 15 Q3.8 7.8 13 7.4 Q22.2 7.8 23.8 15 Q22.2 21.6 15 22.4 L13 25 L11 22.4 Q3.8 21.6 2.2 15Z" fill="#fff"/><rect x="6" y="11.3" width="14" height="7.4" rx="3.7" fill="#f23c0e"/><circle cx="10.2" cy="15" r="1.2" fill="#ffd8c8"/><circle cx="15.8" cy="15" r="1.2" fill="#ffd8c8"/></svg>
<svg style="position:absolute;left:484px;top:7.5px" width="67" height="14.5" viewBox="0 0 80 16"><g stroke="#111" stroke-width="3.4" fill="none" stroke-linecap="butt"><path d="M12 1.5H2V14.5H12M2 8H10"/><path d="M15 15L21 1.5L27 15"/><path d="M30 15V2L37 11L44 2V15"/><path d="M59 4A6.5 6.5 0 1 0 60 11"/><path d="M67 1V14.5H77"/></g><circle cx="21" cy="13" r="1.3" fill="#f03a10"/><path d="M56 2.5A6.5 6.5 0 0 1 59.8 10.5" stroke="#f03a10" stroke-width="3.4" fill="none"/><circle cx="58" cy="12" r="1.3" fill="#f03a10"/></svg>
<svg style="position:absolute;left:805px;top:568px" width="170" height="40" viewBox="0 0 170 40"><g stroke="#17a2d6" stroke-width="3.2" fill="none" stroke-linecap="square" stroke-linejoin="miter" opacity="0.88">
<path d="M11 4.5 L6.5 15"/><path d="M7 12 L17 10.5 Q14 25 7 33"/><path d="M9 19 L11 23"/>
<path d="M23 4.5 V33"/><path d="M29.5 11 L32.5 29"/>
<path d="M40 5.5 L42.5 9"/><path d="M39.5 14.5 L42.5 18.5"/><path d="M38.5 32.5 L43 22.5"/>
<path d="M67 5.5 H49 V32.5 H67"/>
<path d="M113 4 V8.5"/><path d="M100.5 9.5 H124 L101.5 32 Q113 31 128 33"/>
<path d="M145.5 3 V6"/><path d="M131.5 11 V6.8 H159.5 V10.5"/><path d="M135 13.5 H156"/><path d="M150 14 L135 23"/><path d="M135.5 20 L152 17"/><path d="M135.5 32 L154 24.5"/><path d="M148.5 15 V32.5 L145 31"/><path d="M152.5 20.5 L161 32.5"/>
</g></svg>
<svg style="position:absolute;left:873px;top:572px" width="30" height="30" viewBox="0 0 30 30"><circle cx="14.6" cy="14.6" r="14.6" fill="#b4102e"/><g stroke="#e8f0f0" stroke-width="2.4" fill="none"><path d="M15 8.5 H8 Q6.5 8.5 6.5 10 V20 Q6.5 21.5 8 21.5 H15 M6.5 15 H13.5"/><path d="M17 21.5 V10 Q17 8.5 18.5 8.5 H22.5 Q24 8.5 24 10 V21.5 M17 15.5 H24"/></g></svg>
<div style="position:absolute;left:806px;top:587px;width:165px;height:1px;background:rgba(190,190,160,0.55);"></div>
<div style="position:absolute;left:809px;top:606px;font-size:17px;color:#3ab4e6;white-space:pre;line-height:1;letter-spacing:1.5px;-webkit-text-stroke:0.5px #3ab4e6;">www.eazhijia.com</div>
<div style="position:absolute;left:914px;top:614px;width:110px;height:26px;background:#fb7c1c;"></div>
<svg style="position:absolute;left:914px;top:614px" width="26" height="26" viewBox="0 0 26 26"><rect x="0" y="0" width="26" height="26" rx="5.5" fill="#f23c0e"/><circle cx="13" cy="3.6" r="1.7" fill="#ffe8e0"/><rect x="12.4" y="4" width="1.2" height="3.5" fill="#ffe8e0"/><path d="M2.2 15 Q3.8 7.8 13 7.4 Q22.2 7.8 23.8 15 Q22.2 21.6 15 22.4 L13 25 L11 22.4 Q3.8 21.6 2.2 15Z" fill="#fff"/><rect x="6" y="11.3" width="14" height="7.4" rx="3.7" fill="#f23c0e"/><circle cx="10.2" cy="15" r="1.2" fill="#ffd8c8"/><circle cx="15.8" cy="15" r="1.2" fill="#ffd8c8"/></svg>
<svg style="position:absolute;left:946px;top:618.5px" width="76" height="16.5" viewBox="0 0 80 16"><g stroke="#111" stroke-width="3.2" fill="none" stroke-linecap="butt"><path d="M12 1.5H2V14.5H12M2 8H10"/><path d="M15 15L21 1.5L27 15"/><path d="M30 15V2L37 11L44 2V15"/><path d="M59 4A6.5 6.5 0 1 0 60 11"/><path d="M67 1V14.5H77"/></g><circle cx="21" cy="13" r="1.3" fill="#f03a10"/><path d="M56 2.5A6.5 6.5 0 0 1 59.8 10.5" stroke="#f03a10" stroke-width="3.2" fill="none"/><circle cx="58" cy="12" r="1.3" fill="#f03a10"/></svg>
</body></html>
